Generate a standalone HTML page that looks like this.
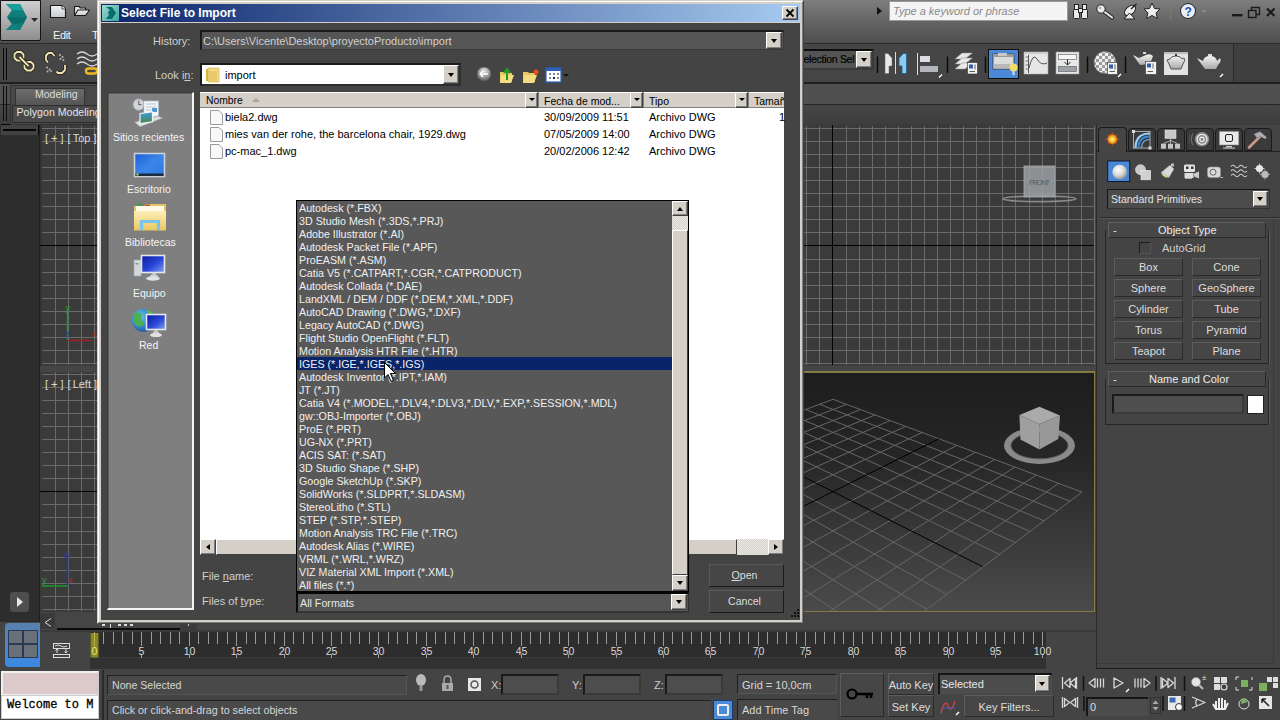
<!DOCTYPE html>
<html><head><meta charset="utf-8">
<style>
*{margin:0;padding:0;box-sizing:border-box}
html,body{width:1280px;height:720px;overflow:hidden;background:#444;font-family:"Liberation Sans",sans-serif;font-size:11px;color:#ddd}
.a{position:absolute}
.t{position:absolute;white-space:pre;line-height:1}
.sunk{background:#4a4a4a;border-top:1px solid #1c1c1c;border-left:1px solid #1c1c1c;border-bottom:1px solid #5a5a5a;border-right:1px solid #5a5a5a}
.btn3{background:#464646;border:1px solid #2a2a2a;border-top-color:#5c5c5c;border-left-color:#5c5c5c}
.wbtn{background:#d4d0c8;border-top:1px solid #fff;border-left:1px solid #fff;border-right:1px solid #404040;border-bottom:1px solid #404040;box-shadow:inset -1px -1px 0 #808080}
.darr{position:absolute;left:50%;top:50%;margin-left:-3.5px;margin-top:-2px;width:0;height:0;border-left:3.5px solid transparent;border-right:3.5px solid transparent;border-top:4px solid #000}
.uarr{position:absolute;left:50%;top:50%;margin-left:-3.5px;margin-top:-2px;width:0;height:0;border-left:3.5px solid transparent;border-right:3.5px solid transparent;border-bottom:4px solid #000}
.larr{position:absolute;left:50%;top:50%;margin-left:-2px;margin-top:-3.5px;width:0;height:0;border-top:3.5px solid transparent;border-bottom:3.5px solid transparent;border-right:4px solid #000}
.rarr{position:absolute;left:50%;top:50%;margin-left:-2px;margin-top:-3.5px;width:0;height:0;border-top:3.5px solid transparent;border-bottom:3.5px solid transparent;border-left:4px solid #000}
.check{background-color:#eceae6;background-image:linear-gradient(45deg,#d4d0c8 25%,transparent 25%,transparent 75%,#d4d0c8 75%),linear-gradient(45deg,#d4d0c8 25%,transparent 25%,transparent 75%,#d4d0c8 75%);background-size:2px 2px;background-position:0 0,1px 1px}
</style></head><body>
<!-- TOP BAR -->
<div class="a" style="left:0;top:0;width:1280px;height:44px;background:linear-gradient(#7e7e7e,#666 45%,#4e4e4e)"></div>
<div class="a" style="left:0;top:43px;width:1280px;height:1px;background:#2c2c2c"></div>
<!-- app button -->
<div class="a" style="left:0;top:0;width:41px;height:41px;background:linear-gradient(#cfcfcf,#8e8e8e);border:1px solid #151515;border-radius:0 0 2px 2px"></div>
<svg class="a" style="left:0;top:0" width="41" height="41" viewBox="0 0 41 41">
<polygon points="6,4 20,4 27,17 20,30 6,30 12,24 7,17 12,10" fill="#0f7f7c"/>
<polygon points="6,4 20,4 23.5,10.5 12,10" fill="#1b9e97"/>
<polygon points="7,17 27,17 23.5,23.5 12,24" fill="#0c6e6a"/>
<polygon points="12,24 23.5,23.5 20,30 6,30" fill="#117f7a"/>
<polygon points="31,18 38,18 34.5,22" fill="#2a2a2a"/>
</svg>
<!-- quick access -->
<svg class="a" style="left:48px;top:3px" width="50" height="20">
<defs><linearGradient id="qa" x1="0" y1="0" x2="0" y2="1"><stop offset="0" stop-color="#f0f2f4"/><stop offset="1" stop-color="#c8ccd2"/></linearGradient></defs>
<path d="M2.5 2.5 H14 L17.5 6 V14.5 H2.5 Z" fill="url(#qa)" stroke="#1a1a1a" stroke-width="1.1" stroke-linejoin="round"/>
<path d="M14 2.5 V6 H17.5" fill="#fff" stroke="#1a1a1a" stroke-width="0.8"/>
<path d="M26.5 12.5 V3.5 H31 L32.5 5 H37.5 V7" fill="#dfe2e6" stroke="#1a1a1a" stroke-width="1.1" stroke-linejoin="round"/>
<path d="M26.5 12.5 L30 7 H41.5 L37.5 12.5 Z" fill="url(#qa)" stroke="#1a1a1a" stroke-width="1.1" stroke-linejoin="round"/>
</svg>
<div class="t" style="left:53px;top:29.7px;font-size:11px;letter-spacing:-0.4px;color:#f4f4f4">Edit</div>
<div class="t" style="left:92px;top:29.7px;font-size:11px;color:#f4f4f4">T</div>
<!-- search -->
<div class="a" style="left:877px;top:7px;width:0;height:0;border-top:4px solid transparent;border-bottom:4px solid transparent;border-left:5px solid #111"></div>
<div class="a" style="left:889px;top:1px;width:179px;height:20px;background:#f4f4f4;border:1px solid #9a9a9a"></div>
<div class="t" style="left:893px;top:6.3px;font-size:11px;font-style:italic;color:#8a8a8a">Type a keyword or phrase</div>
<svg class="a" style="left:1070px;top:0" width="210" height="24">
<!-- binoculars -->
<g fill="#ececec" stroke="#222" stroke-width="1">
<rect x="3.5" y="9.5" width="6" height="9" rx="1"/><rect x="11.5" y="9.5" width="6" height="9" rx="1"/>
<rect x="4.5" y="4.5" width="4" height="5"/><rect x="12.5" y="4.5" width="4" height="5"/>
<rect x="8.5" y="8.5" width="4" height="4"/>
</g>
<!-- key -->
<g stroke="#222" stroke-width="1"><path d="M33.5 11 L42 17.5" stroke="#222" stroke-width="4" stroke-linecap="round"/><path d="M33.5 11 L42 17.5" stroke="#e8e8e8" stroke-width="2.2" stroke-linecap="round"/>
<circle cx="31" cy="9" r="4.2" fill="#ececec"/><circle cx="30" cy="8" r="1.2" fill="#aaa" stroke="none"/></g>
<!-- satellite -->
<ellipse cx="60" cy="10.5" rx="6.5" ry="4" transform="rotate(-40 60 10.5)" fill="#ececec" stroke="#222" stroke-width="1"/>
<path d="M54 19 L59.5 13 L65 19 Z" fill="#ececec" stroke="#222" stroke-width="1"/><path d="M61 9 L66.5 4" stroke="#222" stroke-width="1.5"/>
<!-- star -->
<path d="M82 3 L84.5 8.5 L90 9 L86 13 L87.5 18.5 L82 15.5 L76.5 18.5 L78 13 L74 9 L79.5 8.5 Z" fill="#ececec" stroke="#222"/>
<line x1="100.5" y1="3" x2="100.5" y2="20" stroke="#777"/>
<!-- help -->
<circle cx="118" cy="11" r="7.5" fill="#e8eef8" stroke="#222"/>
<text x="114.5" y="15.5" font-family="Liberation Sans" font-weight="bold" font-size="12" fill="#2a4ea8">?</text>
<polygon points="131,10 137,10 134,13" fill="#888"/>
<!-- min restore close -->
<rect x="162" y="14" width="10.5" height="2.4" fill="#1a1a1a"/>
<rect x="178.5" y="10.5" width="7.5" height="7" fill="none" stroke="#1a1a1a" stroke-width="1.4"/>
<path d="M181.5 10.5 V7.5 H189.5 V14.5 H186" fill="none" stroke="#1a1a1a" stroke-width="1.4"/>
<path d="M197 8.5 L204.5 16 M204.5 8.5 L197 16" stroke="#1a1a1a" stroke-width="2.2"/>
</svg>

<!-- MAIN TOOLBAR -->
<div class="a" style="left:0;top:44px;width:1233px;height:39px;background:#454545"></div>
<div class="a" style="left:1233px;top:44px;width:47px;height:39px;background:#3f3f3f;border-left:1px solid #2a2a2a"></div>
<div class="a" style="left:0;top:82px;width:1280px;height:2px;background:#1f1f1f"></div>
<div class="a" style="left:3px;top:48px;width:1px;height:32px;background:#0a0a0a"></div>
<div class="a" style="left:6px;top:48px;width:1px;height:32px;background:#0a0a0a"></div>
<svg class="a" style="left:0;top:44px" width="98" height="40">
<g fill="none" stroke-linejoin="round">
<path d="M14.5 10 L17 8 L21 8 L23.5 10.5 L23.5 14 L21 16.5 L17 16.5 L14.5 14 Z" stroke="#2a2418" stroke-width="3.6"/>
<path d="M24.5 20 L27 18 L31 18 L33.5 20.5 L33.5 24 L31 26.5 L27 26.5 L24.5 24 Z" stroke="#2a2418" stroke-width="3.6"/>
<path d="M14.5 10 L17 8 L21 8 L23.5 10.5 L23.5 14 L21 16.5 L17 16.5 L14.5 14 Z" stroke="#ece2b8" stroke-width="1.8"/>
<path d="M24.5 20 L27 18 L31 18 L33.5 20.5 L33.5 24 L31 26.5 L27 26.5 L24.5 24 Z" stroke="#ece2b8" stroke-width="1.8"/>
<path d="M19.5 13 L28.5 22" stroke="#2a2418" stroke-width="4"/><path d="M19.5 13 L28.5 22" stroke="#ece2b8" stroke-width="2"/>
<path d="M48 18.5 L46 16 V11.5 L48.5 9 H52 L54.5 12" stroke="#2a2418" stroke-width="3.6"/>
<path d="M48 18.5 L46 16 V11.5 L48.5 9 H52 L54.5 12" stroke="#ece2b8" stroke-width="1.8"/>
<path d="M65 21 V26 L62 29 H58 L56.5 27.5" stroke="#2a2418" stroke-width="3.6"/>
<path d="M65 21 V26 L62 29 H58 L56.5 27.5" stroke="#ece2b8" stroke-width="1.8"/>
</g>
<g fill="#b8b8b8"><circle cx="60" cy="11" r="1"/><circle cx="62.5" cy="13" r="1"/><circle cx="60.5" cy="15" r="1"/><circle cx="63.5" cy="16" r="0.9"/><circle cx="47" cy="23.5" r="1"/><circle cx="49.5" cy="25.5" r="1"/><circle cx="47.5" cy="27.5" r="1"/><circle cx="51" cy="27" r="0.9"/></g>
<g fill="none" stroke="#d8d8d8" stroke-width="1.3"><path d="M77 10 Q82 6 87 10 T97 10"/><path d="M77 15 Q82 11 87 15 T97 15"/><path d="M77 20 Q82 16 87 20 T97 20"/></g>
<rect x="86" y="24.5" width="11" height="5" rx="2.5" fill="none" stroke="#f0b820" stroke-width="2.4"/>
</svg>
<!-- selection set combo -->
<div class="a" style="left:790px;top:49px;width:84px;height:21px;background:#555;border-top:2px solid #0e0e0e;border-left:2px solid #0e0e0e;border-bottom:2px solid #3a3a3a;border-right:2px solid #3a3a3a;overflow:hidden"><div class="t" style="left:4.8px;top:2.7px;font-size:10.5px;letter-spacing:-0.3px;color:#000;-webkit-text-stroke:0.2px #000">Selection Sel</div></div>
<div class="a wbtn" style="left:856px;top:51px;width:16px;height:17px"><div class="darr"></div></div>
<svg class="a" style="left:874px;top:44px" width="360" height="40">
<defs><pattern id="chk" width="6" height="6" patternUnits="userSpaceOnUse"><rect width="6" height="6" fill="#9a9a9a"/><rect width="3" height="3" fill="#f0f0f0"/><rect x="3" y="3" width="3" height="3" fill="#f0f0f0"/></pattern>
<linearGradient id="tp" x1="0" y1="0" x2="0" y2="1"><stop offset="0" stop-color="#f4f4f4"/><stop offset="1" stop-color="#a8a8a8"/></linearGradient></defs>
<g stroke="#0c0c0c" stroke-width="1.5"><line x1="3.5" y1="12.5" x2="3.5" y2="29"/><line x1="73.5" y1="12.5" x2="73.5" y2="29"/><line x1="111.5" y1="12.5" x2="111.5" y2="29"/><line x1="213.5" y1="12.5" x2="213.5" y2="29"/><line x1="251.5" y1="12.5" x2="251.5" y2="29"/></g>
<!-- mirror -->
<path d="M11 9.5 L14 9.5 L18 14 V22 H15 V29.5 H11 Z" fill="#e8e8e8" stroke="#666" stroke-width="0.5"/>
<line x1="21.5" y1="8" x2="21.5" y2="30" stroke="#ddd" stroke-width="1"/>
<path d="M32.5 9.5 L29.5 9.5 L25 14 V22 H28 V29.5 H32.5 Z" fill="#8ccaf0" stroke="#1f5f90" stroke-width="0.8"/>
<!-- align -->
<line x1="43.5" y1="9" x2="43.5" y2="31" stroke="#ddd" stroke-width="1"/>
<rect x="46" y="12" width="10" height="6" fill="#dadde2"/><rect x="46" y="22" width="18" height="6" fill="#b4b8be"/>
<path d="M65 33.5 L68 30.5" stroke="#fff" stroke-width="1.4"/>
<!-- layers -->
<g fill="#e8e8e8" stroke="#888" stroke-width="0.5"><path d="M81 15 L91 15 L98.5 9 L88 9 Z"/><path d="M81 20 L91 20 L98.5 14 L88 14 Z"/><path d="M81 25 L91 25 L98.5 19 L88 19 Z"/></g>
<rect x="93.5" y="18.5" width="10" height="11.5" fill="#f2f2f2" stroke="#333" stroke-width="0.6"/><rect x="95" y="20.5" width="4" height="4" fill="#2f5fa8"/><rect x="100" y="20.5" width="2" height="5" fill="#aaa"/><path d="M95.5 27.5 H101" stroke="#333" stroke-width="0.8"/>
<!-- scene explorer (active) -->
<rect x="114.5" y="5.5" width="30" height="29" fill="#4a88d8" stroke="#0e0e0e" stroke-width="1"/>
<rect x="119" y="10" width="21" height="15" fill="#dcdcdc" stroke="#333" stroke-width="0.8"/><rect x="119" y="10" width="21" height="3" fill="#999"/><rect x="124" y="9" width="9" height="3" fill="#c8c8c8"/><rect x="119.5" y="20" width="20" height="4.5" fill="#b8b8b8"/>
<circle cx="139.5" cy="23.5" r="4" fill="#f2dc6a"/><rect x="138.5" y="27" width="2" height="4" fill="#ddd"/>
<!-- curve editor -->
<rect x="150" y="8" width="24" height="22" fill="#e6e6e6" stroke="#aaa" stroke-width="0.6"/><rect x="150" y="8" width="24" height="2" fill="#ccc"/>
<path d="M155 24 Q159 8 163 15 T173 19" fill="none" stroke="#555" stroke-width="1"/><line x1="154.5" y1="11" x2="154.5" y2="29" stroke="#555"/><g stroke="#555" stroke-width="0.8"><line x1="151.5" y1="13" x2="154" y2="13"/><line x1="151.5" y1="17" x2="154" y2="17"/><line x1="151.5" y1="21" x2="154" y2="21"/><line x1="151.5" y1="25" x2="154" y2="25"/></g>
<!-- schematic -->
<rect x="182" y="8" width="23" height="22" fill="#e8e8e8" stroke="#999" stroke-width="0.6"/>
<rect x="184.5" y="10.5" width="18" height="5" fill="#f6f6f6" stroke="#555" stroke-width="0.6"/><rect x="184.5" y="22.5" width="18" height="5" fill="#9ca2aa" stroke="#555" stroke-width="0.6"/>
<path d="M193.5 15.5 V21 M190.5 18 L193.5 21 L196.5 18" stroke="#222" fill="none"/>
<!-- material -->
<circle cx="231" cy="18.5" r="11" fill="url(#chk)"/><circle cx="231" cy="18.5" r="11" fill="none" stroke="#777" stroke-width="0.6"/>
<rect x="233.5" y="18.5" width="10" height="12" fill="#f2f2f2" stroke="#333" stroke-width="0.6"/><rect x="235" y="20.5" width="4" height="4" fill="#2f5fa8"/><rect x="240" y="20.5" width="2" height="5" fill="#aaa"/><path d="M235.5 27.5 H241" stroke="#333" stroke-width="0.8"/>
<path d="M244 33 L247 30" stroke="#fff" stroke-width="1.4"/>
<!-- teapot 1 -->
<path d="M259 11 L265 14 L272 11 Q276 9 279 12 L276 20 L266 21 Z" fill="url(#tp)"/><rect x="269" y="8" width="3" height="2" fill="#ddd"/>
<rect x="271.5" y="17.5" width="11" height="13" fill="#f2f2f2" stroke="#333" stroke-width="0.6"/><rect x="273" y="19.5" width="4" height="4" fill="#2f5fa8"/><rect x="278" y="19.5" width="2" height="5" fill="#aaa"/><path d="M273.5 27.5 H279" stroke="#333" stroke-width="0.8"/>
<!-- render frame -->
<rect x="290" y="8" width="24" height="23" fill="#e2e2e2"/><rect x="290" y="8" width="24" height="2" fill="#bbb"/>
<path d="M296 15 Q297 12 302 12 Q307 12 308 15 L310 14 Q312 16 309 20 L307 25 H297 L295 20 L293 16 Z" fill="url(#tp)" stroke="#333" stroke-width="0.8"/><rect x="301" y="10" width="2" height="2" fill="#333"/>
<!-- teapot 2 -->
<path d="M323 14 L329 17 Q330 12 336 12 Q342 12 343 17 L346 14 Q348 17 344 21 L342 25 H331 L328 21 Z" fill="url(#tp)"/><rect x="334" y="10" width="4" height="2" fill="#ddd"/>
<path d="M346 33 L349 30" stroke="#fff" stroke-width="1.4"/>
</svg>

<!-- RIBBON -->
<div class="a" style="left:0;top:84px;width:1280px;height:20px;background:#505050"></div>
<div class="a" style="left:0;top:104px;width:1280px;height:1px;background:#262626"></div>
<div class="a" style="left:0;top:105px;width:1280px;height:20px;background:linear-gradient(#474747,#3c3c3c)"></div>
<div class="a" style="left:3px;top:86px;width:1px;height:35px;background:#0a0a0a"></div>
<div class="a" style="left:6px;top:86px;width:1px;height:35px;background:#0a0a0a"></div>
<div class="a" style="left:10px;top:85px;width:90px;height:40px;background:#484848;border:1px solid #333"></div>
<div class="a" style="left:15px;top:88px;width:70px;height:17px;background:linear-gradient(#6c6c6c,#555);border:1px solid #333;border-bottom:none"></div>
<div class="t" style="left:35px;top:89.3px;font-size:10.5px;color:#dcdcdc">Modeling</div>
<div class="a" style="left:12px;top:105px;width:90px;height:18px;background:#4a4a4a;border:1px solid #2c2c2c"></div>
<div class="t" style="left:16.5px;top:107.3px;font-size:10.6px;color:#e6e6e6">Polygon Modeling</div>
<div class="a" style="left:0;top:125px;width:39px;height:497px;background:#2d2d2d"></div>
<div class="a" style="left:1px;top:125px;width:37px;height:10px;background:#424242"></div>
<div class="a" style="left:3px;top:129px;width:33px;height:1.5px;background:#050505"></div>
<div class="a" style="left:1px;top:124px;width:9px;height:1px;background:#050505"></div>
<div class="a" style="left:38px;top:125px;width:1px;height:10px;background:#050505"></div>
<div class="a" style="left:39px;top:125px;width:1px;height:497px;background:#1e1e1e"></div>
<div class="a" style="left:10px;top:592px;width:19px;height:20px;background:#4e4e4e;border-radius:3px"></div>
<div class="a" style="left:17px;top:597px;width:0;height:0;border-top:5px solid transparent;border-bottom:5px solid transparent;border-left:6px solid #e8e8e8"></div>
<svg class="a" style="left:0;top:0" width="1280" height="720">
<defs><linearGradient id="pg" x1="0" y1="0" x2="0" y2="1"><stop offset="0" stop-color="#1d1d1d"/><stop offset="0.35" stop-color="#262626"/><stop offset="1" stop-color="#4b4b4b"/></linearGradient></defs>
<rect x="40" y="125" width="528" height="241" fill="#3b3b3b"/><rect x="40" y="125" width="2" height="487" fill="#333"/>
<line x1="55.5" y1="126" x2="55.5" y2="365" stroke="#6b6b6b" stroke-width="1"/><line x1="68.5" y1="126" x2="68.5" y2="365" stroke="#6b6b6b" stroke-width="1"/><line x1="81.5" y1="126" x2="81.5" y2="365" stroke="#6b6b6b" stroke-width="1"/><line x1="94.5" y1="126" x2="94.5" y2="365" stroke="#6b6b6b" stroke-width="1"/><line x1="107.5" y1="126" x2="107.5" y2="365" stroke="#6b6b6b" stroke-width="1"/><line x1="121.5" y1="126" x2="121.5" y2="365" stroke="#6b6b6b" stroke-width="1"/><line x1="134.5" y1="126" x2="134.5" y2="365" stroke="#6b6b6b" stroke-width="1"/><line x1="147.5" y1="126" x2="147.5" y2="365" stroke="#6b6b6b" stroke-width="1"/><line x1="160.5" y1="126" x2="160.5" y2="365" stroke="#6b6b6b" stroke-width="1"/><line x1="173.5" y1="126" x2="173.5" y2="365" stroke="#6b6b6b" stroke-width="1"/><line x1="186.5" y1="126" x2="186.5" y2="365" stroke="#6b6b6b" stroke-width="1"/><line x1="199.5" y1="126" x2="199.5" y2="365" stroke="#6b6b6b" stroke-width="1"/><line x1="212.5" y1="126" x2="212.5" y2="365" stroke="#6b6b6b" stroke-width="1"/><line x1="225.5" y1="126" x2="225.5" y2="365" stroke="#6b6b6b" stroke-width="1"/><line x1="238.5" y1="126" x2="238.5" y2="365" stroke="#6b6b6b" stroke-width="1"/><line x1="251.5" y1="126" x2="251.5" y2="365" stroke="#6b6b6b" stroke-width="1"/><line x1="264.5" y1="126" x2="264.5" y2="365" stroke="#6b6b6b" stroke-width="1"/><line x1="277.5" y1="126" x2="277.5" y2="365" stroke="#6b6b6b" stroke-width="1"/><line x1="290.5" y1="126" x2="290.5" y2="365" stroke="#6b6b6b" stroke-width="1"/><line x1="317.5" y1="126" x2="317.5" y2="365" stroke="#6b6b6b" stroke-width="1"/><line x1="330.5" y1="126" x2="330.5" y2="365" stroke="#6b6b6b" stroke-width="1"/><line x1="343.5" y1="126" x2="343.5" y2="365" stroke="#6b6b6b" stroke-width="1"/><line x1="356.5" y1="126" x2="356.5" y2="365" stroke="#6b6b6b" stroke-width="1"/><line x1="369.5" y1="126" x2="369.5" y2="365" stroke="#6b6b6b" stroke-width="1"/><line x1="382.5" y1="126" x2="382.5" y2="365" stroke="#6b6b6b" stroke-width="1"/><line x1="395.5" y1="126" x2="395.5" y2="365" stroke="#6b6b6b" stroke-width="1"/><line x1="408.5" y1="126" x2="408.5" y2="365" stroke="#6b6b6b" stroke-width="1"/><line x1="421.5" y1="126" x2="421.5" y2="365" stroke="#6b6b6b" stroke-width="1"/><line x1="434.5" y1="126" x2="434.5" y2="365" stroke="#6b6b6b" stroke-width="1"/><line x1="447.5" y1="126" x2="447.5" y2="365" stroke="#6b6b6b" stroke-width="1"/><line x1="460.5" y1="126" x2="460.5" y2="365" stroke="#6b6b6b" stroke-width="1"/><line x1="473.5" y1="126" x2="473.5" y2="365" stroke="#6b6b6b" stroke-width="1"/><line x1="486.5" y1="126" x2="486.5" y2="365" stroke="#6b6b6b" stroke-width="1"/><line x1="500.5" y1="126" x2="500.5" y2="365" stroke="#6b6b6b" stroke-width="1"/><line x1="513.5" y1="126" x2="513.5" y2="365" stroke="#6b6b6b" stroke-width="1"/><line x1="526.5" y1="126" x2="526.5" y2="365" stroke="#6b6b6b" stroke-width="1"/><line x1="539.5" y1="126" x2="539.5" y2="365" stroke="#6b6b6b" stroke-width="1"/><line x1="552.5" y1="126" x2="552.5" y2="365" stroke="#6b6b6b" stroke-width="1"/><line x1="565.5" y1="126" x2="565.5" y2="365" stroke="#6b6b6b" stroke-width="1"/><line x1="42" y1="128.5" x2="567" y2="128.5" stroke="#6b6b6b" stroke-width="1"/><line x1="42" y1="141.5" x2="567" y2="141.5" stroke="#6b6b6b" stroke-width="1"/><line x1="42" y1="154.5" x2="567" y2="154.5" stroke="#6b6b6b" stroke-width="1"/><line x1="42" y1="167.5" x2="567" y2="167.5" stroke="#6b6b6b" stroke-width="1"/><line x1="42" y1="180.5" x2="567" y2="180.5" stroke="#6b6b6b" stroke-width="1"/><line x1="42" y1="193.5" x2="567" y2="193.5" stroke="#6b6b6b" stroke-width="1"/><line x1="42" y1="206.5" x2="567" y2="206.5" stroke="#6b6b6b" stroke-width="1"/><line x1="42" y1="219.5" x2="567" y2="219.5" stroke="#6b6b6b" stroke-width="1"/><line x1="42" y1="232.5" x2="567" y2="232.5" stroke="#6b6b6b" stroke-width="1"/><line x1="42" y1="259.5" x2="567" y2="259.5" stroke="#6b6b6b" stroke-width="1"/><line x1="42" y1="272.5" x2="567" y2="272.5" stroke="#6b6b6b" stroke-width="1"/><line x1="42" y1="285.5" x2="567" y2="285.5" stroke="#6b6b6b" stroke-width="1"/><line x1="42" y1="298.5" x2="567" y2="298.5" stroke="#6b6b6b" stroke-width="1"/><line x1="42" y1="311.5" x2="567" y2="311.5" stroke="#6b6b6b" stroke-width="1"/><line x1="42" y1="324.5" x2="567" y2="324.5" stroke="#6b6b6b" stroke-width="1"/><line x1="42" y1="337.5" x2="567" y2="337.5" stroke="#6b6b6b" stroke-width="1"/><line x1="42" y1="350.5" x2="567" y2="350.5" stroke="#6b6b6b" stroke-width="1"/><line x1="42" y1="363.5" x2="567" y2="363.5" stroke="#6b6b6b" stroke-width="1"/>
<line x1="40" y1="245.5" x2="567" y2="245.5" stroke="#000" stroke-width="1"/>
<line x1="303.5" y1="125" x2="303.5" y2="365" stroke="#000" stroke-width="1"/>
<rect x="40" y="366" width="1056" height="6" fill="#454545"/>
<rect x="40" y="372" width="528" height="240" fill="#3b3b3b"/>
<line x1="55.5" y1="372" x2="55.5" y2="611" stroke="#6b6b6b" stroke-width="1"/><line x1="68.5" y1="372" x2="68.5" y2="611" stroke="#6b6b6b" stroke-width="1"/><line x1="81.5" y1="372" x2="81.5" y2="611" stroke="#6b6b6b" stroke-width="1"/><line x1="94.5" y1="372" x2="94.5" y2="611" stroke="#6b6b6b" stroke-width="1"/><line x1="107.5" y1="372" x2="107.5" y2="611" stroke="#6b6b6b" stroke-width="1"/><line x1="121.5" y1="372" x2="121.5" y2="611" stroke="#6b6b6b" stroke-width="1"/><line x1="134.5" y1="372" x2="134.5" y2="611" stroke="#6b6b6b" stroke-width="1"/><line x1="147.5" y1="372" x2="147.5" y2="611" stroke="#6b6b6b" stroke-width="1"/><line x1="160.5" y1="372" x2="160.5" y2="611" stroke="#6b6b6b" stroke-width="1"/><line x1="173.5" y1="372" x2="173.5" y2="611" stroke="#6b6b6b" stroke-width="1"/><line x1="186.5" y1="372" x2="186.5" y2="611" stroke="#6b6b6b" stroke-width="1"/><line x1="199.5" y1="372" x2="199.5" y2="611" stroke="#6b6b6b" stroke-width="1"/><line x1="212.5" y1="372" x2="212.5" y2="611" stroke="#6b6b6b" stroke-width="1"/><line x1="225.5" y1="372" x2="225.5" y2="611" stroke="#6b6b6b" stroke-width="1"/><line x1="238.5" y1="372" x2="238.5" y2="611" stroke="#6b6b6b" stroke-width="1"/><line x1="251.5" y1="372" x2="251.5" y2="611" stroke="#6b6b6b" stroke-width="1"/><line x1="264.5" y1="372" x2="264.5" y2="611" stroke="#6b6b6b" stroke-width="1"/><line x1="277.5" y1="372" x2="277.5" y2="611" stroke="#6b6b6b" stroke-width="1"/><line x1="290.5" y1="372" x2="290.5" y2="611" stroke="#6b6b6b" stroke-width="1"/><line x1="317.5" y1="372" x2="317.5" y2="611" stroke="#6b6b6b" stroke-width="1"/><line x1="330.5" y1="372" x2="330.5" y2="611" stroke="#6b6b6b" stroke-width="1"/><line x1="343.5" y1="372" x2="343.5" y2="611" stroke="#6b6b6b" stroke-width="1"/><line x1="356.5" y1="372" x2="356.5" y2="611" stroke="#6b6b6b" stroke-width="1"/><line x1="369.5" y1="372" x2="369.5" y2="611" stroke="#6b6b6b" stroke-width="1"/><line x1="382.5" y1="372" x2="382.5" y2="611" stroke="#6b6b6b" stroke-width="1"/><line x1="395.5" y1="372" x2="395.5" y2="611" stroke="#6b6b6b" stroke-width="1"/><line x1="408.5" y1="372" x2="408.5" y2="611" stroke="#6b6b6b" stroke-width="1"/><line x1="421.5" y1="372" x2="421.5" y2="611" stroke="#6b6b6b" stroke-width="1"/><line x1="434.5" y1="372" x2="434.5" y2="611" stroke="#6b6b6b" stroke-width="1"/><line x1="447.5" y1="372" x2="447.5" y2="611" stroke="#6b6b6b" stroke-width="1"/><line x1="460.5" y1="372" x2="460.5" y2="611" stroke="#6b6b6b" stroke-width="1"/><line x1="473.5" y1="372" x2="473.5" y2="611" stroke="#6b6b6b" stroke-width="1"/><line x1="486.5" y1="372" x2="486.5" y2="611" stroke="#6b6b6b" stroke-width="1"/><line x1="500.5" y1="372" x2="500.5" y2="611" stroke="#6b6b6b" stroke-width="1"/><line x1="513.5" y1="372" x2="513.5" y2="611" stroke="#6b6b6b" stroke-width="1"/><line x1="526.5" y1="372" x2="526.5" y2="611" stroke="#6b6b6b" stroke-width="1"/><line x1="539.5" y1="372" x2="539.5" y2="611" stroke="#6b6b6b" stroke-width="1"/><line x1="552.5" y1="372" x2="552.5" y2="611" stroke="#6b6b6b" stroke-width="1"/><line x1="565.5" y1="372" x2="565.5" y2="611" stroke="#6b6b6b" stroke-width="1"/><line x1="42" y1="374.5" x2="567" y2="374.5" stroke="#6b6b6b" stroke-width="1"/><line x1="42" y1="387.5" x2="567" y2="387.5" stroke="#6b6b6b" stroke-width="1"/><line x1="42" y1="400.5" x2="567" y2="400.5" stroke="#6b6b6b" stroke-width="1"/><line x1="42" y1="413.5" x2="567" y2="413.5" stroke="#6b6b6b" stroke-width="1"/><line x1="42" y1="426.5" x2="567" y2="426.5" stroke="#6b6b6b" stroke-width="1"/><line x1="42" y1="439.5" x2="567" y2="439.5" stroke="#6b6b6b" stroke-width="1"/><line x1="42" y1="452.5" x2="567" y2="452.5" stroke="#6b6b6b" stroke-width="1"/><line x1="42" y1="465.5" x2="567" y2="465.5" stroke="#6b6b6b" stroke-width="1"/><line x1="42" y1="478.5" x2="567" y2="478.5" stroke="#6b6b6b" stroke-width="1"/><line x1="42" y1="504.5" x2="567" y2="504.5" stroke="#6b6b6b" stroke-width="1"/><line x1="42" y1="517.5" x2="567" y2="517.5" stroke="#6b6b6b" stroke-width="1"/><line x1="42" y1="531.5" x2="567" y2="531.5" stroke="#6b6b6b" stroke-width="1"/><line x1="42" y1="544.5" x2="567" y2="544.5" stroke="#6b6b6b" stroke-width="1"/><line x1="42" y1="557.5" x2="567" y2="557.5" stroke="#6b6b6b" stroke-width="1"/><line x1="42" y1="570.5" x2="567" y2="570.5" stroke="#6b6b6b" stroke-width="1"/><line x1="42" y1="583.5" x2="567" y2="583.5" stroke="#6b6b6b" stroke-width="1"/><line x1="42" y1="596.5" x2="567" y2="596.5" stroke="#6b6b6b" stroke-width="1"/><line x1="42" y1="609.5" x2="567" y2="609.5" stroke="#6b6b6b" stroke-width="1"/>
<line x1="40" y1="491.5" x2="567" y2="491.5" stroke="#000" stroke-width="1"/>
<rect x="568" y="125" width="527" height="241" fill="#3b3b3b"/>
<line x1="571.5" y1="126" x2="571.5" y2="365" stroke="#6b6b6b" stroke-width="1"/><line x1="584.5" y1="126" x2="584.5" y2="365" stroke="#6b6b6b" stroke-width="1"/><line x1="597.5" y1="126" x2="597.5" y2="365" stroke="#6b6b6b" stroke-width="1"/><line x1="610.5" y1="126" x2="610.5" y2="365" stroke="#6b6b6b" stroke-width="1"/><line x1="623.5" y1="126" x2="623.5" y2="365" stroke="#6b6b6b" stroke-width="1"/><line x1="636.5" y1="126" x2="636.5" y2="365" stroke="#6b6b6b" stroke-width="1"/><line x1="649.5" y1="126" x2="649.5" y2="365" stroke="#6b6b6b" stroke-width="1"/><line x1="663.5" y1="126" x2="663.5" y2="365" stroke="#6b6b6b" stroke-width="1"/><line x1="676.5" y1="126" x2="676.5" y2="365" stroke="#6b6b6b" stroke-width="1"/><line x1="689.5" y1="126" x2="689.5" y2="365" stroke="#6b6b6b" stroke-width="1"/><line x1="702.5" y1="126" x2="702.5" y2="365" stroke="#6b6b6b" stroke-width="1"/><line x1="715.5" y1="126" x2="715.5" y2="365" stroke="#6b6b6b" stroke-width="1"/><line x1="728.5" y1="126" x2="728.5" y2="365" stroke="#6b6b6b" stroke-width="1"/><line x1="741.5" y1="126" x2="741.5" y2="365" stroke="#6b6b6b" stroke-width="1"/><line x1="754.5" y1="126" x2="754.5" y2="365" stroke="#6b6b6b" stroke-width="1"/><line x1="767.5" y1="126" x2="767.5" y2="365" stroke="#6b6b6b" stroke-width="1"/><line x1="780.5" y1="126" x2="780.5" y2="365" stroke="#6b6b6b" stroke-width="1"/><line x1="793.5" y1="126" x2="793.5" y2="365" stroke="#6b6b6b" stroke-width="1"/><line x1="806.5" y1="126" x2="806.5" y2="365" stroke="#6b6b6b" stroke-width="1"/><line x1="819.5" y1="126" x2="819.5" y2="365" stroke="#6b6b6b" stroke-width="1"/><line x1="846.5" y1="126" x2="846.5" y2="365" stroke="#6b6b6b" stroke-width="1"/><line x1="859.5" y1="126" x2="859.5" y2="365" stroke="#6b6b6b" stroke-width="1"/><line x1="872.5" y1="126" x2="872.5" y2="365" stroke="#6b6b6b" stroke-width="1"/><line x1="885.5" y1="126" x2="885.5" y2="365" stroke="#6b6b6b" stroke-width="1"/><line x1="898.5" y1="126" x2="898.5" y2="365" stroke="#6b6b6b" stroke-width="1"/><line x1="911.5" y1="126" x2="911.5" y2="365" stroke="#6b6b6b" stroke-width="1"/><line x1="924.5" y1="126" x2="924.5" y2="365" stroke="#6b6b6b" stroke-width="1"/><line x1="937.5" y1="126" x2="937.5" y2="365" stroke="#6b6b6b" stroke-width="1"/><line x1="950.5" y1="126" x2="950.5" y2="365" stroke="#6b6b6b" stroke-width="1"/><line x1="963.5" y1="126" x2="963.5" y2="365" stroke="#6b6b6b" stroke-width="1"/><line x1="976.5" y1="126" x2="976.5" y2="365" stroke="#6b6b6b" stroke-width="1"/><line x1="989.5" y1="126" x2="989.5" y2="365" stroke="#6b6b6b" stroke-width="1"/><line x1="1002.5" y1="126" x2="1002.5" y2="365" stroke="#6b6b6b" stroke-width="1"/><line x1="1015.5" y1="126" x2="1015.5" y2="365" stroke="#6b6b6b" stroke-width="1"/><line x1="1029.5" y1="126" x2="1029.5" y2="365" stroke="#6b6b6b" stroke-width="1"/><line x1="1042.5" y1="126" x2="1042.5" y2="365" stroke="#6b6b6b" stroke-width="1"/><line x1="1055.5" y1="126" x2="1055.5" y2="365" stroke="#6b6b6b" stroke-width="1"/><line x1="1068.5" y1="126" x2="1068.5" y2="365" stroke="#6b6b6b" stroke-width="1"/><line x1="1081.5" y1="126" x2="1081.5" y2="365" stroke="#6b6b6b" stroke-width="1"/><line x1="1094.5" y1="126" x2="1094.5" y2="365" stroke="#6b6b6b" stroke-width="1"/><line x1="568" y1="128.5" x2="1094.6" y2="128.5" stroke="#6b6b6b" stroke-width="1"/><line x1="568" y1="141.5" x2="1094.6" y2="141.5" stroke="#6b6b6b" stroke-width="1"/><line x1="568" y1="154.5" x2="1094.6" y2="154.5" stroke="#6b6b6b" stroke-width="1"/><line x1="568" y1="167.5" x2="1094.6" y2="167.5" stroke="#6b6b6b" stroke-width="1"/><line x1="568" y1="180.5" x2="1094.6" y2="180.5" stroke="#6b6b6b" stroke-width="1"/><line x1="568" y1="193.5" x2="1094.6" y2="193.5" stroke="#6b6b6b" stroke-width="1"/><line x1="568" y1="206.5" x2="1094.6" y2="206.5" stroke="#6b6b6b" stroke-width="1"/><line x1="568" y1="219.5" x2="1094.6" y2="219.5" stroke="#6b6b6b" stroke-width="1"/><line x1="568" y1="232.5" x2="1094.6" y2="232.5" stroke="#6b6b6b" stroke-width="1"/><line x1="568" y1="259.5" x2="1094.6" y2="259.5" stroke="#6b6b6b" stroke-width="1"/><line x1="568" y1="272.5" x2="1094.6" y2="272.5" stroke="#6b6b6b" stroke-width="1"/><line x1="568" y1="285.5" x2="1094.6" y2="285.5" stroke="#6b6b6b" stroke-width="1"/><line x1="568" y1="298.5" x2="1094.6" y2="298.5" stroke="#6b6b6b" stroke-width="1"/><line x1="568" y1="311.5" x2="1094.6" y2="311.5" stroke="#6b6b6b" stroke-width="1"/><line x1="568" y1="324.5" x2="1094.6" y2="324.5" stroke="#6b6b6b" stroke-width="1"/><line x1="568" y1="337.5" x2="1094.6" y2="337.5" stroke="#6b6b6b" stroke-width="1"/><line x1="568" y1="350.5" x2="1094.6" y2="350.5" stroke="#6b6b6b" stroke-width="1"/><line x1="568" y1="363.5" x2="1094.6" y2="363.5" stroke="#6b6b6b" stroke-width="1"/>
<line x1="568" y1="245.5" x2="1094" y2="245.5" stroke="#000" stroke-width="1"/>
<line x1="832.5" y1="125" x2="832.5" y2="365" stroke="#000" stroke-width="1"/>
<rect x="567" y="125" width="1.5" height="487" fill="#454545"/>
<rect x="568" y="372" width="528" height="240" fill="url(#pg)"/>
<clipPath id="pc"><rect x="569" y="373" width="526" height="238"/></clipPath><g clip-path="url(#pc)">
<line x1="585.9" y1="491.2" x2="833.0" y2="399.3" stroke="#676767" stroke-width="1"/><line x1="585.9" y1="491.2" x2="832.9" y2="680.5" stroke="#676767" stroke-width="1"/><line x1="597.7" y1="500.3" x2="846.4" y2="404.4" stroke="#676767" stroke-width="1"/><line x1="608.9" y1="482.6" x2="859.0" y2="660.8" stroke="#676767" stroke-width="1"/><line x1="610.1" y1="509.8" x2="860.4" y2="409.6" stroke="#676767" stroke-width="1"/><line x1="630.9" y1="474.4" x2="883.2" y2="642.4" stroke="#676767" stroke-width="1"/><line x1="623.3" y1="519.8" x2="874.9" y2="415.0" stroke="#676767" stroke-width="1"/><line x1="651.9" y1="466.6" x2="905.8" y2="625.3" stroke="#676767" stroke-width="1"/><line x1="637.1" y1="530.4" x2="890.0" y2="420.6" stroke="#676767" stroke-width="1"/><line x1="672.0" y1="459.2" x2="927.0" y2="609.3" stroke="#676767" stroke-width="1"/><line x1="651.7" y1="541.6" x2="905.6" y2="426.4" stroke="#676767" stroke-width="1"/><line x1="691.2" y1="452.0" x2="946.8" y2="594.3" stroke="#676767" stroke-width="1"/><line x1="667.2" y1="553.5" x2="922.0" y2="432.5" stroke="#676767" stroke-width="1"/><line x1="709.7" y1="445.2" x2="965.5" y2="580.2" stroke="#676767" stroke-width="1"/><line x1="701.0" y1="579.4" x2="956.8" y2="445.5" stroke="#676767" stroke-width="1"/><line x1="744.2" y1="432.3" x2="999.6" y2="554.4" stroke="#676767" stroke-width="1"/><line x1="719.5" y1="593.5" x2="975.3" y2="452.4" stroke="#676767" stroke-width="1"/><line x1="760.5" y1="426.3" x2="1015.2" y2="542.6" stroke="#676767" stroke-width="1"/><line x1="739.2" y1="608.6" x2="994.7" y2="459.6" stroke="#676767" stroke-width="1"/><line x1="776.1" y1="420.5" x2="1030.0" y2="531.4" stroke="#676767" stroke-width="1"/><line x1="760.2" y1="624.8" x2="1015.0" y2="467.2" stroke="#676767" stroke-width="1"/><line x1="791.2" y1="414.9" x2="1044.0" y2="520.8" stroke="#676767" stroke-width="1"/><line x1="782.8" y1="642.0" x2="1036.3" y2="475.1" stroke="#676767" stroke-width="1"/><line x1="805.6" y1="409.5" x2="1057.3" y2="510.8" stroke="#676767" stroke-width="1"/><line x1="806.9" y1="660.5" x2="1058.6" y2="483.4" stroke="#676767" stroke-width="1"/><line x1="819.6" y1="404.3" x2="1070.0" y2="501.2" stroke="#676767" stroke-width="1"/><line x1="832.9" y1="680.5" x2="1082.0" y2="492.1" stroke="#676767" stroke-width="1"/><line x1="833.0" y1="399.3" x2="1082.0" y2="492.1" stroke="#676767" stroke-width="1"/><line x1="683.6" y1="566.0" x2="939.0" y2="438.8" stroke="#000" stroke-width="1"/><line x1="727.3" y1="438.6" x2="983.0" y2="566.9" stroke="#000" stroke-width="1"/>
</g>
<rect x="569" y="372" width="526" height="240" fill="none" stroke="#847a46" stroke-width="2"/>
<g stroke-width="1.5"><line x1="67.5" y1="309" x2="67.5" y2="340" stroke="#1a9a2a"/><line x1="67.5" y1="340.5" x2="92" y2="340.5" stroke="#a02020"/><line x1="67.5" y1="553" x2="67.5" y2="586" stroke="#2030b0"/><line x1="42" y1="586" x2="67.5" y2="586" stroke="#1a9a2a"/></g>
<g font-family="Liberation Sans" font-size="9"><text x="65.5" y="311" fill="#2aa03a">y</text><text x="65.5" y="337" fill="#2030b8">z</text><text x="92" y="337" fill="#c02020">x</text><text x="64" y="558" fill="#2838c0">z</text><text x="42" y="583" fill="#2aa03a">y</text><text x="68" y="583" fill="#c02020">x</text></g>
<ellipse cx="1039.5" cy="198.8" rx="36.5" ry="2.8" fill="none" stroke="#8a8a8a" stroke-width="1.6"/>
<rect x="1024" y="166" width="31" height="31" fill="#a4a8ac" fill-opacity="0.78" stroke="#a8acb0" stroke-width="0.8"/>
<text x="1029" y="185" font-family="Liberation Sans" font-size="7.5" fill="#555a5e" textLength="21">FRONT</text>
<ellipse cx="1039.5" cy="445.5" rx="35.5" ry="18.5" fill="#8a8a8a"/>
<ellipse cx="1039.5" cy="445.5" rx="28.5" ry="13.3" fill="#262626" stroke="#5a5a5a" stroke-width="1"/>
<polygon points="1039.4,406.7 1060,415.5 1039.4,424 1019.4,415" fill="#aaaaaa"/>
<polygon points="1019.4,415 1039.4,424 1039.4,449.4 1020.5,439.4" fill="#9f9f9f"/>
<polygon points="1039.4,424 1060,415.5 1058.3,438.9 1039.4,449.4" fill="#989898"/>
</svg>
<div class="t" style="left:45px;top:133px;font-size:11px;color:#d8d8d8;letter-spacing:0">[<span style="margin-left:3px">+</span><span style="margin-left:3px">]</span><span style="margin-left:4px">[</span><span style="margin-left:2px">Top</span><span style="margin-left:3px">]</span></div>
<div class="t" style="left:45px;top:379px;font-size:11px;color:#d8d8d8;letter-spacing:0">[<span style="margin-left:3px">+</span><span style="margin-left:3px">]</span><span style="margin-left:4px">[</span><span style="margin-left:2px">Left</span><span style="margin-left:3px">]</span></div><!-- COMMAND PANEL -->
<div class="a" style="left:1095px;top:125px;width:185px;height:545px;background:#444"></div>
<div class="a" style="left:1096px;top:125px;width:1px;height:543px;background:#2a2a2a"></div>
<div class="a" style="left:1097px;top:151px;width:183px;height:1px;background:#222"></div>
<div class="a" style="left:1098px;top:127px;width:29px;height:25px;background:#454545;border:1px solid #1a1a1a;border-bottom:none;border-radius:4px 4px 0 0"></div>
<div class="a" style="left:1128px;top:128px;width:28px;height:23px;background:#3a3a3a;border:1px solid #1a1a1a;border-radius:4px 4px 0 0"></div>
<div class="a" style="left:1157px;top:128px;width:28px;height:23px;background:#3a3a3a;border:1px solid #1a1a1a;border-radius:4px 4px 0 0"></div>
<div class="a" style="left:1186px;top:128px;width:28px;height:23px;background:#3a3a3a;border:1px solid #1a1a1a;border-radius:4px 4px 0 0"></div>
<div class="a" style="left:1215px;top:128px;width:28px;height:23px;background:#3a3a3a;border:1px solid #1a1a1a;border-radius:4px 4px 0 0"></div>
<div class="a" style="left:1244px;top:128px;width:28px;height:23px;background:#3a3a3a;border:1px solid #1a1a1a;border-radius:4px 4px 0 0"></div>
<svg class="a" style="left:1095px;top:125px" width="185" height="62">
<defs>
<radialGradient id="sun" cx="0.5" cy="0.5" r="0.5"><stop offset="0" stop-color="#fff6a0"/><stop offset="0.5" stop-color="#f8c030"/><stop offset="1" stop-color="#d86a10"/></radialGradient>
<radialGradient id="sph" cx="0.4" cy="0.35" r="0.65"><stop offset="0" stop-color="#ffffff"/><stop offset="0.6" stop-color="#d8d8d8"/><stop offset="1" stop-color="#9a9a9a"/></radialGradient>
</defs>
<!-- create sun -->
<g stroke="#c84a20" stroke-width="0.9"><line x1="17.3" y1="7" x2="17.3" y2="21.5"/><line x1="10" y1="14.3" x2="24.5" y2="14.3"/><line x1="12.3" y1="9.3" x2="22.3" y2="19.3"/><line x1="22.3" y1="9.3" x2="12.3" y2="19.3"/></g>
<circle cx="17.3" cy="14.3" r="5" fill="url(#sun)"/>
<!-- modify -->
<rect x="38.5" y="6.5" width="16.5" height="16.5" fill="none" stroke="#c8c8c8" stroke-width="0.8"/>
<path d="M40.5 23 Q40.5 8.5 55 8.5" fill="none" stroke="#9ad0f4" stroke-width="2.2"/><path d="M43.5 23 Q43.5 11.5 55 11.5" fill="none" stroke="#3a88d0" stroke-width="2"/><path d="M46.5 23 Q46.5 14.5 55 14.5" fill="none" stroke="#6ab4ec" stroke-width="1.2"/>
<rect x="37" y="5" width="3" height="3" fill="#ddd"/><rect x="53.5" y="21.5" width="3" height="3" fill="#ddd"/>
<!-- hierarchy -->
<rect x="70" y="5" width="11" height="8.5" fill="#c8c8c8" stroke="#eee" stroke-width="0.5"/>
<g stroke="#ccc" stroke-width="0.8" fill="none"><path d="M75.5 13.5 V15.5 M68.5 18.5 L75.5 15.5 L82.5 18.5 M75.5 15.5 V18.5"/></g>
<rect x="66" y="18.7" width="5" height="5" fill="#c4c4c4"/><rect x="73" y="18.7" width="5" height="5" fill="#c4c4c4"/><rect x="80" y="18.7" width="5" height="5" fill="#c4c4c4"/>
<!-- motion -->
<circle cx="107" cy="14.3" r="7.2" fill="#888"/><circle cx="107" cy="14.3" r="5" fill="none" stroke="#eee" stroke-width="1.3"/><circle cx="107" cy="14.3" r="2.2" fill="none" stroke="#eee" stroke-width="1.2"/>
<path d="M97.5 8.5 Q95 14.3 97.5 20" fill="none" stroke="#777" stroke-width="1"/><path d="M95 9.5 Q93 14.3 95 19" fill="none" stroke="#555" stroke-width="0.8"/>
<!-- display -->
<rect x="124.3" y="6.4" width="19.5" height="13.6" fill="#e8e8e8" stroke="#888" stroke-width="0.6"/>
<rect x="130.5" y="9.5" width="7" height="7" fill="none" stroke="#222" stroke-width="1" rx="1.5"/>
<rect x="131" y="21" width="6" height="1.5" fill="#ccc"/><rect x="128" y="22.5" width="12" height="1.2" fill="#bbb"/>
<!-- utilities hammer -->
<path d="M154 22.5 L165 11.5" stroke="#c89a88" stroke-width="2.6" stroke-linecap="round"/>
<path d="M159 9 L165 6.5 L172 12.5 L170 14 L165.5 11.5 L162 13 Z" fill="#aab0b4" stroke="#667" stroke-width="0.5"/>
<!-- sub icons -->
<rect x="12.7" y="36" width="22" height="20.5" fill="#4a88d6" stroke="#0c1a30" stroke-width="1"/>
<circle cx="24.7" cy="47" r="7.3" fill="url(#sph)"/>
<circle cx="45.5" cy="44.7" r="5" fill="#c8c8c8" stroke="#eee" stroke-width="0.6"/><rect x="46" y="45.4" width="9.6" height="9.4" fill="#d0d0d0" stroke="#f0f0f0" stroke-width="0.6"/>
<path d="M66 47.5 L75 40 L79 44 L74 52.5 Z" fill="#d8d8d8" stroke="#888" stroke-width="0.5"/><path d="M66 47.5 Q68 53 74 52.5" fill="#f4e8a0" stroke="#a89040" stroke-width="0.6"/><rect x="76" y="38.5" width="3" height="3" fill="#bbb"/>
<rect x="89" y="39.6" width="11" height="7.5" rx="1.5" fill="#e4e4e4"/><rect x="91" y="41.5" width="2.5" height="2.5" fill="#333"/><rect x="96" y="41.5" width="2.5" height="2.5" fill="#333"/>
<rect x="89.5" y="48" width="9" height="5" fill="#ddd"/><path d="M99 48.5 L104 46.5 V53.5 L99 51.5 Z" fill="#ccc"/><rect x="90" y="53" width="7" height="1" fill="#aaa"/>
<rect x="112.5" y="42" width="13" height="10.5" rx="2.5" fill="#d8d8d8" stroke="#999" stroke-width="0.6"/><circle cx="118" cy="47.2" r="3" fill="none" stroke="#666" stroke-width="1"/><path d="M125.5 52.5 H128" stroke="#bbb"/>
<g fill="none" stroke="#cfcfcf" stroke-width="1.1"><path d="M136 41.5 q2 -2.5 4 0 t4 0 t4 0 t4 0"/><path d="M136 46 q2 -2.5 4 0 t4 0 t4 0 t4 0"/><path d="M136 50.5 q2 -2.5 4 0 t4 0 t4 0 t4 0"/></g>
<circle cx="164.5" cy="43.5" r="3.6" fill="#e8e8e8"/><circle cx="170" cy="49.5" r="3.6" fill="#bbb"/>
<g stroke="#e8e8e8" stroke-width="0.8"><line x1="164.5" y1="38.5" x2="164.5" y2="48.5"/><line x1="159.5" y1="43.5" x2="169.5" y2="43.5"/></g>
<g stroke="#bbb" stroke-width="0.8"><line x1="170" y1="44.5" x2="170" y2="54.5"/><line x1="165" y1="49.5" x2="175" y2="49.5"/></g>
</svg>
<div class="a" style="left:1107px;top:189px;width:163px;height:20px;background:#4c4c4c;border-top:1px solid #161616;border-left:1px solid #161616;border-bottom:1px solid #333;border-right:1px solid #333"></div>
<div class="t" style="left:1111px;top:194px;font-size:10.5px;color:#e4e4e4">Standard Primitives</div>
<div class="a wbtn" style="left:1253px;top:191px;width:15px;height:16px"><div class="darr"></div></div>
<div class="a" style="left:1100px;top:217px;width:180px;height:1px;background:#2c2c2c"></div>
<div class="a" style="left:1101px;top:218px;width:179px;height:1px;background:#555"></div>
<!-- Object Type rollout -->
<div class="a" style="left:1105px;top:230px;width:164px;height:134px;border:1px solid #262626;border-top:none;border-right-color:#262626;box-shadow:1px 0 0 #5a5a5a"></div>
<div class="a" style="left:1108px;top:222px;width:158px;height:16px;background:#474747;border:1px solid #5e5e5e;border-bottom-color:#2a2a2a;border-right-color:#2a2a2a"></div>
<div class="t" style="left:1113px;top:225px;font-size:11px;color:#e8e8e8">-</div>
<div class="t" style="left:1158px;top:225px;font-size:11px;color:#ececec">Object Type</div>
<div class="a" style="left:1139px;top:242px;width:12px;height:12px;border:1px solid #1e1e1e;border-right-color:#555;border-bottom-color:#555;background:#444"></div>
<div class="t" style="left:1162px;top:243px;font-size:11px;color:#cfcfcf">AutoGrid</div>
<div class="a btn3" style="left:1114px;top:258px;width:69px;height:18px"></div><div class="t" style="left:1114px;top:262px;width:69px;text-align:center;font-size:11px;color:#dedede">Box</div>
<div class="a btn3" style="left:1192px;top:258px;width:69px;height:18px"></div><div class="t" style="left:1192px;top:262px;width:69px;text-align:center;font-size:11px;color:#dedede">Cone</div>
<div class="a btn3" style="left:1114px;top:279px;width:69px;height:18px"></div><div class="t" style="left:1114px;top:283px;width:69px;text-align:center;font-size:11px;color:#dedede">Sphere</div>
<div class="a btn3" style="left:1192px;top:279px;width:69px;height:18px"></div><div class="t" style="left:1192px;top:283px;width:69px;text-align:center;font-size:11px;color:#dedede">GeoSphere</div>
<div class="a btn3" style="left:1114px;top:300px;width:69px;height:18px"></div><div class="t" style="left:1114px;top:304px;width:69px;text-align:center;font-size:11px;color:#dedede">Cylinder</div>
<div class="a btn3" style="left:1192px;top:300px;width:69px;height:18px"></div><div class="t" style="left:1192px;top:304px;width:69px;text-align:center;font-size:11px;color:#dedede">Tube</div>
<div class="a btn3" style="left:1114px;top:321px;width:69px;height:18px"></div><div class="t" style="left:1114px;top:325px;width:69px;text-align:center;font-size:11px;color:#dedede">Torus</div>
<div class="a btn3" style="left:1192px;top:321px;width:69px;height:18px"></div><div class="t" style="left:1192px;top:325px;width:69px;text-align:center;font-size:11px;color:#dedede">Pyramid</div>
<div class="a btn3" style="left:1114px;top:342px;width:69px;height:18px"></div><div class="t" style="left:1114px;top:346px;width:69px;text-align:center;font-size:11px;color:#dedede">Teapot</div>
<div class="a btn3" style="left:1192px;top:342px;width:69px;height:18px"></div><div class="t" style="left:1192px;top:346px;width:69px;text-align:center;font-size:11px;color:#dedede">Plane</div>
<!-- Name and Color rollout -->
<div class="a" style="left:1105px;top:379px;width:164px;height:46px;border:1px solid #262626;border-top:none;box-shadow:1px 0 0 #5a5a5a"></div>
<div class="a" style="left:1108px;top:371px;width:158px;height:16px;background:#474747;border:1px solid #5e5e5e;border-bottom-color:#2a2a2a;border-right-color:#2a2a2a"></div>
<div class="t" style="left:1113px;top:374px;font-size:11px;color:#e8e8e8">-</div>
<div class="t" style="left:1149px;top:374px;font-size:11px;color:#ececec">Name and Color</div>
<div class="a" style="left:1112px;top:394px;width:132px;height:20px;background:#4e4e4e;border:2px solid #1a1a1a;border-right-color:#3a3a3a;border-bottom-color:#3a3a3a"></div>
<div class="a" style="left:1247px;top:395px;width:17px;height:19px;background:#fff;border:1px solid #222"></div>
<div class="a" style="left:1273px;top:219px;width:1px;height:445px;background:#3a3a3a"></div>
<div class="a" style="left:1097px;top:663px;width:177px;height:1px;background:#3a3a3a"></div>
<div class="a" style="left:1096px;top:668px;width:184px;height:1px;background:#1c1c1c"></div>
<div class="a" style="left:40px;top:612px;width:1056px;height:19px;background:#454545"></div>
<div class="a" style="left:40px;top:613px;width:15px;height:16px;background:#3a3a3a"></div>
<svg class="a" style="left:43px;top:617px" width="10" height="11"><path d="M8 1.5 L2 5.5 L8 9.5" fill="none" stroke="#d8d8d8" stroke-width="1"/></svg>
<div class="a" style="left:57px;top:628px;width:123px;height:2px;background:#0c0c0c"></div>
<div class="a" style="left:197px;top:630px;width:898px;height:1px;background:#161616"></div>
<div class="a" style="left:1094px;top:630px;width:1px;height:1px;background:#ddd"></div>
<div class="a" style="left:180px;top:623px;width:17px;height:8px;background:#3c3c3c;border-bottom:1px solid #2a2a2a"></div>
<div class="a" style="left:102px;top:624px;width:3px;height:1.5px;background:#ddd"></div>
<div class="a" style="left:109.5px;top:624px;width:1px;height:3.5px;background:#ddd"></div>
<div class="a" style="left:118px;top:624px;width:3px;height:1.5px;background:#ddd"></div>
<div class="a" style="left:123.5px;top:624px;width:3px;height:1.5px;background:#ddd"></div>
<div class="a" style="left:129.5px;top:624px;width:3px;height:1.5px;background:#ddd"></div>
<div class="a" style="left:187.5px;top:624px;width:1px;height:1.5px;background:#ccc"></div>
<div class="a" style="left:39px;top:630px;width:1057px;height:2px;background:#3a3a3a"></div>
<div class="a" style="left:90px;top:632px;width:956px;height:26px;background:#2d2d2d"></div>
<div class="a" style="left:90px;top:657px;width:956px;height:1px;background:#3c3c3c"></div>
<div class="a" style="left:90px;top:658px;width:956px;height:11px;background:#323232"></div>
<svg class="a" style="left:0;top:620px" width="1280" height="60">
<line x1="94.5" y1="12" x2="94.5" y2="26" stroke="#9a9a9a" stroke-width="1"/>
<line x1="94.5" y1="34" x2="94.5" y2="38" stroke="#9a9a9a" stroke-width="1"/>
<line x1="103.5" y1="12" x2="103.5" y2="24" stroke="#9a9a9a" stroke-width="1"/>
<line x1="113.5" y1="12" x2="113.5" y2="24" stroke="#9a9a9a" stroke-width="1"/>
<line x1="122.5" y1="12" x2="122.5" y2="24" stroke="#9a9a9a" stroke-width="1"/>
<line x1="132.5" y1="12" x2="132.5" y2="24" stroke="#9a9a9a" stroke-width="1"/>
<line x1="141.5" y1="12" x2="141.5" y2="26" stroke="#9a9a9a" stroke-width="1"/>
<line x1="141.5" y1="34" x2="141.5" y2="38" stroke="#9a9a9a" stroke-width="1"/>
<line x1="151.5" y1="12" x2="151.5" y2="24" stroke="#9a9a9a" stroke-width="1"/>
<line x1="160.5" y1="12" x2="160.5" y2="24" stroke="#9a9a9a" stroke-width="1"/>
<line x1="170.5" y1="12" x2="170.5" y2="24" stroke="#9a9a9a" stroke-width="1"/>
<line x1="179.5" y1="12" x2="179.5" y2="24" stroke="#9a9a9a" stroke-width="1"/>
<line x1="189.5" y1="12" x2="189.5" y2="26" stroke="#9a9a9a" stroke-width="1"/>
<line x1="189.5" y1="34" x2="189.5" y2="38" stroke="#9a9a9a" stroke-width="1"/>
<line x1="198.5" y1="12" x2="198.5" y2="24" stroke="#9a9a9a" stroke-width="1"/>
<line x1="208.5" y1="12" x2="208.5" y2="24" stroke="#9a9a9a" stroke-width="1"/>
<line x1="217.5" y1="12" x2="217.5" y2="24" stroke="#9a9a9a" stroke-width="1"/>
<line x1="227.5" y1="12" x2="227.5" y2="24" stroke="#9a9a9a" stroke-width="1"/>
<line x1="236.5" y1="12" x2="236.5" y2="26" stroke="#9a9a9a" stroke-width="1"/>
<line x1="236.5" y1="34" x2="236.5" y2="38" stroke="#9a9a9a" stroke-width="1"/>
<line x1="246.5" y1="12" x2="246.5" y2="24" stroke="#9a9a9a" stroke-width="1"/>
<line x1="255.5" y1="12" x2="255.5" y2="24" stroke="#9a9a9a" stroke-width="1"/>
<line x1="265.5" y1="12" x2="265.5" y2="24" stroke="#9a9a9a" stroke-width="1"/>
<line x1="274.5" y1="12" x2="274.5" y2="24" stroke="#9a9a9a" stroke-width="1"/>
<line x1="284.5" y1="12" x2="284.5" y2="26" stroke="#9a9a9a" stroke-width="1"/>
<line x1="284.5" y1="34" x2="284.5" y2="38" stroke="#9a9a9a" stroke-width="1"/>
<line x1="293.5" y1="12" x2="293.5" y2="24" stroke="#9a9a9a" stroke-width="1"/>
<line x1="303.5" y1="12" x2="303.5" y2="24" stroke="#9a9a9a" stroke-width="1"/>
<line x1="312.5" y1="12" x2="312.5" y2="24" stroke="#9a9a9a" stroke-width="1"/>
<line x1="322.5" y1="12" x2="322.5" y2="24" stroke="#9a9a9a" stroke-width="1"/>
<line x1="331.5" y1="12" x2="331.5" y2="26" stroke="#9a9a9a" stroke-width="1"/>
<line x1="331.5" y1="34" x2="331.5" y2="38" stroke="#9a9a9a" stroke-width="1"/>
<line x1="341.5" y1="12" x2="341.5" y2="24" stroke="#9a9a9a" stroke-width="1"/>
<line x1="350.5" y1="12" x2="350.5" y2="24" stroke="#9a9a9a" stroke-width="1"/>
<line x1="359.5" y1="12" x2="359.5" y2="24" stroke="#9a9a9a" stroke-width="1"/>
<line x1="369.5" y1="12" x2="369.5" y2="24" stroke="#9a9a9a" stroke-width="1"/>
<line x1="378.5" y1="12" x2="378.5" y2="26" stroke="#9a9a9a" stroke-width="1"/>
<line x1="378.5" y1="34" x2="378.5" y2="38" stroke="#9a9a9a" stroke-width="1"/>
<line x1="388.5" y1="12" x2="388.5" y2="24" stroke="#9a9a9a" stroke-width="1"/>
<line x1="397.5" y1="12" x2="397.5" y2="24" stroke="#9a9a9a" stroke-width="1"/>
<line x1="407.5" y1="12" x2="407.5" y2="24" stroke="#9a9a9a" stroke-width="1"/>
<line x1="416.5" y1="12" x2="416.5" y2="24" stroke="#9a9a9a" stroke-width="1"/>
<line x1="426.5" y1="12" x2="426.5" y2="26" stroke="#9a9a9a" stroke-width="1"/>
<line x1="426.5" y1="34" x2="426.5" y2="38" stroke="#9a9a9a" stroke-width="1"/>
<line x1="435.5" y1="12" x2="435.5" y2="24" stroke="#9a9a9a" stroke-width="1"/>
<line x1="445.5" y1="12" x2="445.5" y2="24" stroke="#9a9a9a" stroke-width="1"/>
<line x1="454.5" y1="12" x2="454.5" y2="24" stroke="#9a9a9a" stroke-width="1"/>
<line x1="464.5" y1="12" x2="464.5" y2="24" stroke="#9a9a9a" stroke-width="1"/>
<line x1="473.5" y1="12" x2="473.5" y2="26" stroke="#9a9a9a" stroke-width="1"/>
<line x1="473.5" y1="34" x2="473.5" y2="38" stroke="#9a9a9a" stroke-width="1"/>
<line x1="483.5" y1="12" x2="483.5" y2="24" stroke="#9a9a9a" stroke-width="1"/>
<line x1="492.5" y1="12" x2="492.5" y2="24" stroke="#9a9a9a" stroke-width="1"/>
<line x1="502.5" y1="12" x2="502.5" y2="24" stroke="#9a9a9a" stroke-width="1"/>
<line x1="511.5" y1="12" x2="511.5" y2="24" stroke="#9a9a9a" stroke-width="1"/>
<line x1="521.5" y1="12" x2="521.5" y2="26" stroke="#9a9a9a" stroke-width="1"/>
<line x1="521.5" y1="34" x2="521.5" y2="38" stroke="#9a9a9a" stroke-width="1"/>
<line x1="530.5" y1="12" x2="530.5" y2="24" stroke="#9a9a9a" stroke-width="1"/>
<line x1="540.5" y1="12" x2="540.5" y2="24" stroke="#9a9a9a" stroke-width="1"/>
<line x1="549.5" y1="12" x2="549.5" y2="24" stroke="#9a9a9a" stroke-width="1"/>
<line x1="559.5" y1="12" x2="559.5" y2="24" stroke="#9a9a9a" stroke-width="1"/>
<line x1="568.5" y1="12" x2="568.5" y2="26" stroke="#9a9a9a" stroke-width="1"/>
<line x1="568.5" y1="34" x2="568.5" y2="38" stroke="#9a9a9a" stroke-width="1"/>
<line x1="578.5" y1="12" x2="578.5" y2="24" stroke="#9a9a9a" stroke-width="1"/>
<line x1="587.5" y1="12" x2="587.5" y2="24" stroke="#9a9a9a" stroke-width="1"/>
<line x1="597.5" y1="12" x2="597.5" y2="24" stroke="#9a9a9a" stroke-width="1"/>
<line x1="606.5" y1="12" x2="606.5" y2="24" stroke="#9a9a9a" stroke-width="1"/>
<line x1="616.5" y1="12" x2="616.5" y2="26" stroke="#9a9a9a" stroke-width="1"/>
<line x1="616.5" y1="34" x2="616.5" y2="38" stroke="#9a9a9a" stroke-width="1"/>
<line x1="625.5" y1="12" x2="625.5" y2="24" stroke="#9a9a9a" stroke-width="1"/>
<line x1="635.5" y1="12" x2="635.5" y2="24" stroke="#9a9a9a" stroke-width="1"/>
<line x1="644.5" y1="12" x2="644.5" y2="24" stroke="#9a9a9a" stroke-width="1"/>
<line x1="654.5" y1="12" x2="654.5" y2="24" stroke="#9a9a9a" stroke-width="1"/>
<line x1="663.5" y1="12" x2="663.5" y2="26" stroke="#9a9a9a" stroke-width="1"/>
<line x1="663.5" y1="34" x2="663.5" y2="38" stroke="#9a9a9a" stroke-width="1"/>
<line x1="672.5" y1="12" x2="672.5" y2="24" stroke="#9a9a9a" stroke-width="1"/>
<line x1="682.5" y1="12" x2="682.5" y2="24" stroke="#9a9a9a" stroke-width="1"/>
<line x1="691.5" y1="12" x2="691.5" y2="24" stroke="#9a9a9a" stroke-width="1"/>
<line x1="701.5" y1="12" x2="701.5" y2="24" stroke="#9a9a9a" stroke-width="1"/>
<line x1="710.5" y1="12" x2="710.5" y2="26" stroke="#9a9a9a" stroke-width="1"/>
<line x1="710.5" y1="34" x2="710.5" y2="38" stroke="#9a9a9a" stroke-width="1"/>
<line x1="720.5" y1="12" x2="720.5" y2="24" stroke="#9a9a9a" stroke-width="1"/>
<line x1="729.5" y1="12" x2="729.5" y2="24" stroke="#9a9a9a" stroke-width="1"/>
<line x1="739.5" y1="12" x2="739.5" y2="24" stroke="#9a9a9a" stroke-width="1"/>
<line x1="748.5" y1="12" x2="748.5" y2="24" stroke="#9a9a9a" stroke-width="1"/>
<line x1="758.5" y1="12" x2="758.5" y2="26" stroke="#9a9a9a" stroke-width="1"/>
<line x1="758.5" y1="34" x2="758.5" y2="38" stroke="#9a9a9a" stroke-width="1"/>
<line x1="767.5" y1="12" x2="767.5" y2="24" stroke="#9a9a9a" stroke-width="1"/>
<line x1="777.5" y1="12" x2="777.5" y2="24" stroke="#9a9a9a" stroke-width="1"/>
<line x1="786.5" y1="12" x2="786.5" y2="24" stroke="#9a9a9a" stroke-width="1"/>
<line x1="796.5" y1="12" x2="796.5" y2="24" stroke="#9a9a9a" stroke-width="1"/>
<line x1="805.5" y1="12" x2="805.5" y2="26" stroke="#9a9a9a" stroke-width="1"/>
<line x1="805.5" y1="34" x2="805.5" y2="38" stroke="#9a9a9a" stroke-width="1"/>
<line x1="815.5" y1="12" x2="815.5" y2="24" stroke="#9a9a9a" stroke-width="1"/>
<line x1="824.5" y1="12" x2="824.5" y2="24" stroke="#9a9a9a" stroke-width="1"/>
<line x1="834.5" y1="12" x2="834.5" y2="24" stroke="#9a9a9a" stroke-width="1"/>
<line x1="843.5" y1="12" x2="843.5" y2="24" stroke="#9a9a9a" stroke-width="1"/>
<line x1="853.5" y1="12" x2="853.5" y2="26" stroke="#9a9a9a" stroke-width="1"/>
<line x1="853.5" y1="34" x2="853.5" y2="38" stroke="#9a9a9a" stroke-width="1"/>
<line x1="862.5" y1="12" x2="862.5" y2="24" stroke="#9a9a9a" stroke-width="1"/>
<line x1="872.5" y1="12" x2="872.5" y2="24" stroke="#9a9a9a" stroke-width="1"/>
<line x1="881.5" y1="12" x2="881.5" y2="24" stroke="#9a9a9a" stroke-width="1"/>
<line x1="891.5" y1="12" x2="891.5" y2="24" stroke="#9a9a9a" stroke-width="1"/>
<line x1="900.5" y1="12" x2="900.5" y2="26" stroke="#9a9a9a" stroke-width="1"/>
<line x1="900.5" y1="34" x2="900.5" y2="38" stroke="#9a9a9a" stroke-width="1"/>
<line x1="910.5" y1="12" x2="910.5" y2="24" stroke="#9a9a9a" stroke-width="1"/>
<line x1="919.5" y1="12" x2="919.5" y2="24" stroke="#9a9a9a" stroke-width="1"/>
<line x1="929.5" y1="12" x2="929.5" y2="24" stroke="#9a9a9a" stroke-width="1"/>
<line x1="938.5" y1="12" x2="938.5" y2="24" stroke="#9a9a9a" stroke-width="1"/>
<line x1="948.5" y1="12" x2="948.5" y2="26" stroke="#9a9a9a" stroke-width="1"/>
<line x1="948.5" y1="34" x2="948.5" y2="38" stroke="#9a9a9a" stroke-width="1"/>
<line x1="957.5" y1="12" x2="957.5" y2="24" stroke="#9a9a9a" stroke-width="1"/>
<line x1="967.5" y1="12" x2="967.5" y2="24" stroke="#9a9a9a" stroke-width="1"/>
<line x1="976.5" y1="12" x2="976.5" y2="24" stroke="#9a9a9a" stroke-width="1"/>
<line x1="985.5" y1="12" x2="985.5" y2="24" stroke="#9a9a9a" stroke-width="1"/>
<line x1="995.5" y1="12" x2="995.5" y2="26" stroke="#9a9a9a" stroke-width="1"/>
<line x1="995.5" y1="34" x2="995.5" y2="38" stroke="#9a9a9a" stroke-width="1"/>
<line x1="1004.5" y1="12" x2="1004.5" y2="24" stroke="#9a9a9a" stroke-width="1"/>
<line x1="1014.5" y1="12" x2="1014.5" y2="24" stroke="#9a9a9a" stroke-width="1"/>
<line x1="1023.5" y1="12" x2="1023.5" y2="24" stroke="#9a9a9a" stroke-width="1"/>
<line x1="1033.5" y1="12" x2="1033.5" y2="24" stroke="#9a9a9a" stroke-width="1"/>
<line x1="1042.5" y1="12" x2="1042.5" y2="26" stroke="#9a9a9a" stroke-width="1"/>
<line x1="1042.5" y1="34" x2="1042.5" y2="38" stroke="#9a9a9a" stroke-width="1"/>
<rect x="90.5" y="13" width="8" height="24.5" fill="#8a8628"/>
<line x1="94.5" y1="13" x2="94.5" y2="26" stroke="#b8b850"/>
<text x="94.5" y="34.5" text-anchor="middle" font-family="Liberation Sans" font-size="10.5" fill="#e8e870">0</text>
<text x="141.5" y="34.5" text-anchor="middle" font-family="Liberation Sans" font-size="10.5" fill="#d8d8d8">5</text>
<text x="189.5" y="34.5" text-anchor="middle" font-family="Liberation Sans" font-size="10.5" fill="#d8d8d8">10</text>
<text x="236.5" y="34.5" text-anchor="middle" font-family="Liberation Sans" font-size="10.5" fill="#d8d8d8">15</text>
<text x="284.5" y="34.5" text-anchor="middle" font-family="Liberation Sans" font-size="10.5" fill="#d8d8d8">20</text>
<text x="331.5" y="34.5" text-anchor="middle" font-family="Liberation Sans" font-size="10.5" fill="#d8d8d8">25</text>
<text x="378.5" y="34.5" text-anchor="middle" font-family="Liberation Sans" font-size="10.5" fill="#d8d8d8">30</text>
<text x="426.5" y="34.5" text-anchor="middle" font-family="Liberation Sans" font-size="10.5" fill="#d8d8d8">35</text>
<text x="473.5" y="34.5" text-anchor="middle" font-family="Liberation Sans" font-size="10.5" fill="#d8d8d8">40</text>
<text x="521.5" y="34.5" text-anchor="middle" font-family="Liberation Sans" font-size="10.5" fill="#d8d8d8">45</text>
<text x="568.5" y="34.5" text-anchor="middle" font-family="Liberation Sans" font-size="10.5" fill="#d8d8d8">50</text>
<text x="616.5" y="34.5" text-anchor="middle" font-family="Liberation Sans" font-size="10.5" fill="#d8d8d8">55</text>
<text x="663.5" y="34.5" text-anchor="middle" font-family="Liberation Sans" font-size="10.5" fill="#d8d8d8">60</text>
<text x="710.5" y="34.5" text-anchor="middle" font-family="Liberation Sans" font-size="10.5" fill="#d8d8d8">65</text>
<text x="758.5" y="34.5" text-anchor="middle" font-family="Liberation Sans" font-size="10.5" fill="#d8d8d8">70</text>
<text x="805.5" y="34.5" text-anchor="middle" font-family="Liberation Sans" font-size="10.5" fill="#d8d8d8">75</text>
<text x="853.5" y="34.5" text-anchor="middle" font-family="Liberation Sans" font-size="10.5" fill="#d8d8d8">80</text>
<text x="900.5" y="34.5" text-anchor="middle" font-family="Liberation Sans" font-size="10.5" fill="#d8d8d8">85</text>
<text x="948.5" y="34.5" text-anchor="middle" font-family="Liberation Sans" font-size="10.5" fill="#d8d8d8">90</text>
<text x="995.5" y="34.5" text-anchor="middle" font-family="Liberation Sans" font-size="10.5" fill="#d8d8d8">95</text>
<text x="1042.5" y="34.5" text-anchor="middle" font-family="Liberation Sans" font-size="10.5" fill="#d8d8d8">100</text>
<g fill="none" stroke="#ddd" stroke-width="1"><rect x="53.5" y="23.5" width="16" height="5"/><rect x="53.5" y="34.5" width="16" height="3"/><path d="M57 33 V29 M55.5 30.5 L57 29 L58.5 30.5 M66 29 V33 M64.5 31.5 L66 33 L67.5 31.5"/><path d="M55 26 q3 -2 6 0 t6 0"/></g>
</svg>
<div class="a" style="left:5px;top:623px;width:35px;height:44px;background:linear-gradient(#5a80ae,#4a86cc 60%,#3a8ae4);border-radius:4px 0 0 4px"></div>
<div class="a" style="left:8px;top:630px;width:30px;height:28px;background:#2a3a52"></div>
<div class="a" style="left:9px;top:631px;width:13px;height:12px;background:#6a7078"></div>
<div class="a" style="left:24px;top:631px;width:13px;height:12px;background:#6a7078"></div>
<div class="a" style="left:9px;top:645px;width:13px;height:12px;background:#6a7078"></div>
<div class="a" style="left:24px;top:645px;width:13px;height:12px;background:#6a7078"></div><!-- STATUS BAR -->
<div class="a" style="left:0;top:669px;width:1280px;height:51px;background:#444"></div>
<div class="a" style="left:1px;top:671px;width:98px;height:25px;background:#dcc9c9;border:2px solid #f0f0f0;border-right-color:#ccc"></div>
<div class="a" style="left:1px;top:695px;width:98px;height:24px;background:#fff;border:1px solid #ccc"></div>
<div class="t" style="left:7px;top:699px;font-family:'Liberation Mono',monospace;font-size:12px;color:#000;font-weight:normal;-webkit-text-stroke:0.3px #000">Welcome to M</div>
<div class="a" style="left:102px;top:670px;width:2px;height:50px;background:#2a2a2a"></div>
<div class="a" style="left:107px;top:675px;width:300px;height:20px;background:#494949;border-top:1px solid #202020;border-left:1px solid #202020;border-right:1px solid #555;border-bottom:1px solid #555"></div>
<div class="t" style="left:112px;top:680px;font-size:10.6px;color:#d6d6d6">None Selected</div>
<div class="a" style="left:107px;top:700px;width:604px;height:20px;background:#494949;border-top:1px solid #202020;border-left:1px solid #202020"></div>
<div class="t" style="left:112px;top:705px;font-size:10.7px;color:#d6d6d6">Click or click-and-drag to select objects</div>
<svg class="a" style="left:410px;top:672px" width="80" height="26">
<ellipse cx="11" cy="8" rx="5" ry="6" fill="#bbb"/><rect x="9.5" y="13" width="3" height="6" fill="#999"/>
<path d="M34 11 V8 Q34 4 37.5 4 Q41 4 41 8 V11" fill="none" stroke="#aaa" stroke-width="1.5"/><rect x="32" y="11" width="11" height="8" fill="#aaa"/><rect x="36.5" y="13" width="2" height="4" fill="#555"/>
<rect x="58" y="6" width="13" height="13" fill="#e8e8e8"/><circle cx="64.5" cy="12.5" r="3.5" fill="none" stroke="#555" stroke-width="1.5"/>
</svg>
<div class="t" style="left:491px;top:680px;font-size:11px;color:#ccc">X:</div>
<div class="a" style="left:501px;top:674px;width:58px;height:21px;background:#4d4d4d;border:2px solid #1a1a1a;border-right-color:#3a3a3a;border-bottom-color:#3a3a3a"></div>
<div class="t" style="left:572px;top:680px;font-size:11px;color:#ccc">Y:</div>
<div class="a" style="left:583px;top:674px;width:58px;height:21px;background:#4d4d4d;border:2px solid #1a1a1a;border-right-color:#3a3a3a;border-bottom-color:#3a3a3a"></div>
<div class="t" style="left:654px;top:680px;font-size:11px;color:#ccc">Z:</div>
<div class="a" style="left:665px;top:674px;width:58px;height:21px;background:#4d4d4d;border:2px solid #1a1a1a;border-right-color:#3a3a3a;border-bottom-color:#3a3a3a"></div>
<div class="a" style="left:737px;top:674px;width:100px;height:20px;background:#494949;border-top:1px solid #202020;border-left:1px solid #202020;border-bottom:1px solid #555;border-right:1px solid #555"></div>
<div class="t" style="left:742px;top:680px;font-size:11px;color:#d6d6d6">Grid = 10,0cm</div>
<div class="a" style="left:713px;top:700px;width:20px;height:20px;background:#4a8ad6;border:1px solid #1c3c70"></div>
<div class="a" style="left:717px;top:704px;width:12px;height:12px;border:2px solid #eee;border-radius:2px"></div>
<div class="a" style="left:737px;top:699px;width:100px;height:21px;background:#494949;border-top:1px solid #202020;border-left:1px solid #202020"></div>
<div class="t" style="left:742px;top:705px;font-size:11px;color:#d6d6d6">Add Time Tag</div>
<div class="a btn3" style="left:840px;top:673px;width:44px;height:44px"></div>
<svg class="a" style="left:845px;top:685px" width="36" height="20"><circle cx="7" cy="9" r="4.5" fill="none" stroke="#000" stroke-width="2.2"/><path d="M11 9 H28 M22 9 V13 M26 9 V13" stroke="#000" stroke-width="2.5"/></svg>
<div class="a btn3" style="left:888px;top:673px;width:46px;height:22px"></div>
<div class="t" style="left:888px;top:680px;width:46px;text-align:center;font-size:11px;color:#dedede">Auto Key</div>
<div class="a btn3" style="left:888px;top:695px;width:46px;height:22px"></div>
<div class="t" style="left:888px;top:702px;width:46px;text-align:center;font-size:11px;color:#dedede">Set Key</div>
<div class="a" style="left:938px;top:673px;width:114px;height:21px;background:#4c4c4c;border-top:2px solid #161616;border-left:2px solid #161616"></div>
<div class="t" style="left:941px;top:679px;font-size:11px;color:#e8e8e8">Selected</div>
<div class="a wbtn" style="left:1035px;top:675px;width:15px;height:17px"><div class="darr"></div></div>
<svg class="a" style="left:938px;top:696px" width="24" height="22"><path d="M3 17 Q7 2 10 10 T17 5" fill="none" stroke="#d04040" stroke-width="1.5"/><path d="M3 12 L17 12" stroke="#4060c0" stroke-width="1"/><path d="M18 19 L21 16" stroke="#fff" stroke-width="1.5"/></svg>
<div class="a btn3" style="left:964px;top:695px;width:90px;height:22px"></div>
<div class="t" style="left:964px;top:702px;width:90px;text-align:center;font-size:11px;color:#dedede">Key Filters...</div>
<!-- playback -->
<svg class="a" style="left:1056px;top:670px" width="224" height="50">
<g fill="none" stroke="#d8d8d8" stroke-width="1.3" stroke-linejoin="round">
<path d="M6.5 7 V19 M20.5 7 V19 M8.5 13 L14 8.5 V17.5 Z M14 13 L19.5 8.5 V17.5 Z"/>
<path d="M33 13 L39 8.5 V17.5 Z M41.5 8.5 V17.5 M44.5 8.5 V17.5 M47.5 8.5 V17.5"/>
<path d="M58 8 L67 13 L58 18 Z"/>
<path d="M79 8.5 V17.5 M82 8.5 V17.5 M85 8.5 V17.5 M88 8.5 L94 13 L88 17.5 Z"/>
<path d="M105 7 V19 M119 7 V19 M106.5 8.5 L112 13 L106.5 17.5 Z M112 8.5 L117.5 13 L112 17.5 Z"/>
<path d="M6.5 27 V38 M21.5 27 V38 M8.5 28.5 L13.5 32.5 L8.5 36.5 Z M19.5 28.5 L14.5 32.5 L19.5 36.5 Z"/>
<path d="M136 27 L149 32.5 L136 38 M141 29 Q138.5 32.5 141 36"/>
</g>
<path d="M70 22 L73 19" stroke="#fff" stroke-width="1.5"/>
<g stroke="#111" stroke-width="1.5"><line x1="27.5" y1="6" x2="27.5" y2="21"/><line x1="100" y1="6" x2="100" y2="21"/><line x1="128.5" y1="6" x2="128.5" y2="21"/><line x1="28" y1="26" x2="28" y2="41"/><line x1="107" y1="26" x2="107" y2="41"/><line x1="128.5" y1="26" x2="128.5" y2="41"/></g>
<circle cx="140" cy="12" r="4.5" fill="#e4e4e4" stroke="#999" stroke-width="0.6"/><path d="M143 15 L147 19" stroke="#bbb" stroke-width="2.2"/><text x="146" y="10" font-size="8" fill="#ddd" font-family="Liberation Sans">±</text>
<rect x="158" y="7" width="6" height="6" fill="#ddd"/><rect x="165" y="7" width="6" height="6" fill="#ddd"/><rect x="158" y="14" width="6" height="6" fill="#ddd"/><circle cx="168" cy="17" r="3" fill="none" stroke="#ddd" stroke-width="1.2"/>
<path d="M180 10 V7 H183 M196 7 V10 M180 17 V20 H183 M193 20 H196 V17" stroke="#ddd" fill="none"/><rect x="185" y="10" width="7" height="7" fill="#7ab060"/>
<rect x="211" y="7" width="5" height="5" fill="#ddd"/><rect x="217" y="7" width="5" height="5" fill="#ddd"/><rect x="217" y="13" width="5" height="5" fill="#ddd"/><rect x="203" y="13" width="8" height="8" fill="#7ab060"/>
<rect x="112" y="26" width="13" height="14" fill="#e8e8e8"/><rect x="113.5" y="27.5" width="6" height="5" fill="#3a6ab0"/><circle cx="123" cy="37" r="3.5" fill="#fff" stroke="#333"/>
<path d="M160 39 V31 M163 39 V28 M166 39 V28 M169 39 V30 M157 34 L160 39 H169 L172 33" stroke="#eee" stroke-width="2" fill="none"/>
<circle cx="188" cy="34" r="5" fill="none" stroke="#ddd"/><path d="M186 28 L192 32 L185 34 Z" fill="#7ab060"/>
<rect x="203" y="26" width="13" height="13" fill="#e6e6e6"/><path d="M206 29 L213 36 M206 29 V33 M206 29 H210" stroke="#222" stroke-width="1.5"/>
</svg>
<div class="a" style="left:1086px;top:697px;width:62px;height:19px;background:#4c4c4c;border-top:2px solid #161616;border-left:2px solid #161616"></div>
<div class="t" style="left:1090px;top:702px;font-size:11px;color:#ddd">0</div>
<div class="a" style="left:1150px;top:697px;width:11px;height:17px;border:1px solid #333;background:#444"></div>
<svg class="a" style="left:1150px;top:697px" width="11" height="17"><path d="M2.5 7 L5.5 3.5 L8.5 7 Z M2.5 10 L5.5 13.5 L8.5 10 Z" fill="#aaa"/></svg>
<!-- DIALOG -->
<div class="a" style="left:97px;top:0;width:707px;height:624px;background:#d4d0c8;border-top:1px solid #d4d0c8;border-left:1px solid #d4d0c8;border-right:1px solid #404040;border-bottom:1px solid #404040"></div>
<div class="a" style="left:98px;top:1px;width:705px;height:622px;border-top:1px solid #fff;border-left:1px solid #fff;border-right:1px solid #808080;border-bottom:1px solid #808080"></div>
<div class="a" style="left:101px;top:4px;width:699px;height:18px;background:linear-gradient(to right,#0a246a,#a6caf0)"></div>
<div class="a" style="left:101px;top:23px;width:699px;height:597px;background:#444"></div>
<svg class="a" style="left:102px;top:5px" width="17" height="16">
<defs><linearGradient id="ti" x1="0" y1="0" x2="1" y2="1"><stop offset="0" stop-color="#9fd8d4"/><stop offset="1" stop-color="#3aa8a0"/></linearGradient></defs>
<rect width="17" height="16" fill="url(#ti)"/>
<polygon points="4,2 10,2 14,8 10,14 4,14 7,10 6,7 8,5" fill="#0b6d68"/>
</svg>
<div class="t" style="left:121px;top:7px;font-size:12px;font-weight:bold;color:#fff">Select File to Import</div>
<div class="a wbtn" style="left:782px;top:6px;width:16px;height:14px"></div>
<svg class="a" style="left:782px;top:6px" width="16" height="14"><path d="M4.5 3.5 L11.5 10.5 M11.5 3.5 L4.5 10.5" stroke="#000" stroke-width="1.8"/></svg>

<div class="t" style="left:153px;top:36px;font-size:11px;color:#cfcfcf">History:</div>
<div class="a" style="left:200px;top:30px;width:584px;height:20px;background:#555;border-top:2px solid #1a1a1a;border-left:2px solid #1a1a1a;border-bottom:1px solid #3a3a3a;border-right:1px solid #3a3a3a"></div>
<div class="t" style="left:203px;top:36px;font-size:11px;color:#d0d0d0">C:\Users\Vicente\Desktop\proyectoProducto\import</div>
<div class="a wbtn" style="left:766px;top:32px;width:16px;height:17px"><div class="darr"></div></div>

<div class="t" style="left:155px;top:69.5px;font-size:11px;color:#cfcfcf">Look i<u>n</u>:</div>
<div class="a" style="left:200px;top:63px;width:261px;height:23px;background:#fff;border-top:2px solid #1a1a1a;border-left:2px solid #1a1a1a;border-bottom:2px solid #2e2e2e;border-right:2px solid #2e2e2e"></div>
<svg class="a" style="left:205px;top:66px" width="16" height="17"><path d="M1 3 H7 V15 H1 Z" fill="#d8b848"/><path d="M3 2 H14 V16 H3 Z" fill="#f2dc88" stroke="#c8a840" stroke-width="0.6"/><path d="M3 5 H12 V16 H3 Z" fill="#e8c868"/></svg>
<div class="t" style="left:225px;top:69.8px;font-size:11px;color:#000">import</div>
<div class="a wbtn" style="left:443px;top:65px;width:16px;height:19px"><div class="darr"></div></div>
<svg class="a" style="left:474px;top:64px" width="100" height="22">
<defs><radialGradient id="bk" cx="0.5" cy="0.3" r="0.7"><stop offset="0" stop-color="#e8e8e8"/><stop offset="1" stop-color="#606060"/></radialGradient></defs>
<circle cx="10" cy="10" r="7" fill="url(#bk)" stroke="#555" stroke-width="0.8"/>
<path d="M6 10 H14 M6 10 L9 7 M6 10 L9 13" stroke="#fff" stroke-width="1.6" fill="none"/>
<path d="M26 8 H31 L32 9 H38 V18 H26 Z" fill="#e8c860"/><path d="M27 11 H40 L37 19 H26 Z" fill="#f4dc80"/><path d="M33 16 V6 M30 9 L33 5 L36 9" stroke="#1aa020" stroke-width="2" fill="none"/>
<path d="M49 8 H54 L55 9 H61 V18 H49 Z" fill="#e8c860"/><path d="M50 11 H63 L60 19 H49 Z" fill="#f4dc80"/><circle cx="62" cy="8" r="2.5" fill="#e85020"/>
<rect x="72" y="4" width="15" height="14" fill="#fff" stroke="#2a60c0" stroke-width="1.2"/><rect x="72" y="4" width="15" height="3" fill="#2a60c0"/>
<g fill="#7a8a9a"><rect x="75" y="9" width="2" height="2"/><rect x="79" y="9" width="2" height="2"/><rect x="83" y="9" width="2" height="2"/><rect x="75" y="13" width="2" height="2"/><rect x="79" y="13" width="2" height="2" fill="#223"/><rect x="83" y="13" width="2" height="2"/></g>
<polygon points="89,10 95,10 92,13" fill="#111"/>
</svg>

<!-- places bar -->
<div class="a" style="left:107px;top:92px;width:87px;height:518px;background:#7f7f7f;border-top:1px solid #3c3c3c;border-left:1px solid #3c3c3c;border-right:2px solid #f4f4f4;border-bottom:2px solid #f4f4f4;box-shadow:inset 1px 1px 0 #5e5e5e"></div>
<svg class="a" style="left:125px;top:94px" width="50" height="250">
<defs>
<linearGradient id="dk" x1="0" y1="0" x2="1" y2="1"><stop offset="0" stop-color="#1d5ed8"/><stop offset="0.5" stop-color="#3b86e8"/><stop offset="1" stop-color="#2a78e0"/></linearGradient>
<linearGradient id="scr" x1="0" y1="0" x2="1" y2="1"><stop offset="0" stop-color="#0a1aa0"/><stop offset="0.55" stop-color="#2a48d8"/><stop offset="1" stop-color="#8aa0f0"/></linearGradient>
<radialGradient id="gl" cx="0.35" cy="0.35" r="0.7"><stop offset="0" stop-color="#6ac8f0"/><stop offset="1" stop-color="#1a5aa8"/></radialGradient>
<linearGradient id="fl" x1="0" y1="0" x2="0" y2="1"><stop offset="0" stop-color="#fff0b8"/><stop offset="1" stop-color="#e8c860"/></linearGradient>
<linearGradient id="ph" x1="0" y1="0" x2="0" y2="1"><stop offset="0" stop-color="#3a9ad8"/><stop offset="1" stop-color="#4a8a50"/></linearGradient>
</defs>
<!-- recent -->
<circle cx="13.75" cy="10.6" r="5.8" fill="#d0d4d8" stroke="#9098a0" stroke-width="0.8"/><path d="M13.75 6.5 V10.6 H16.5" stroke="#444" stroke-width="0.8" fill="none"/>
<rect x="18.75" y="6.9" width="15" height="16.8" fill="#f0f4f8" stroke="#98a0a8" stroke-width="0.7"/>
<g stroke="#b8c4d0" stroke-width="1"><line x1="21" y1="10" x2="31" y2="10"/><line x1="21" y1="13" x2="31" y2="13"/><line x1="21" y1="16" x2="26" y2="16"/></g><rect x="27" y="14" width="5" height="4" fill="#4a9ad0"/>
<path d="M9.4 28 L33 22 L38 24 L15 33 Z" fill="#dcdfe2" stroke="#8a9098" stroke-width="0.7"/>
<rect x="15" y="18.75" width="12.5" height="10" fill="url(#ph)" stroke="#f4f4f4" stroke-width="1.2" transform="skewY(-8)" transform-origin="21 24"/>
<!-- desktop -->
<rect x="9.5" y="59.5" width="30" height="23" fill="url(#dk)" stroke="#c8d0da" stroke-width="1.6"/>
<rect x="10.5" y="79.5" width="28" height="2.5" fill="#1a2a40"/><circle cx="12.5" cy="80.5" r="1.3" fill="#8ac860"/>
<!-- libraries -->
<path d="M9 112 H19 L21 110 H41 V136 H9 Z" fill="#e6c464"/>
<rect x="12" y="109.5" width="5" height="3" fill="#3aa040"/><rect x="20" y="110.5" width="5" height="3" fill="#d04a30"/><rect x="29" y="112.5" width="5" height="3" fill="#3a80d0"/>
<rect x="11" y="112" width="28" height="6" fill="#fffbe8"/>
<path d="M9 117 H41 V136.5 H9 Z" fill="url(#fl)"/>
<path d="M16.5 136 V127.5 H33.5 V136" stroke="#78c4ec" stroke-width="3.2" fill="none"/>
<!-- computer -->
<rect x="9" y="166" width="7" height="16" fill="#d4d8dc" stroke="#9aa" stroke-width="0.6"/><rect x="10.5" y="169" width="3" height="1.5" fill="#6a6"/>
<rect x="16.5" y="161.5" width="23" height="17" fill="url(#scr)" stroke="#e4e8ec" stroke-width="1.6"/>
<path d="M24 183 L28 179 H30 L34 183 Z" fill="#c8ccd0"/><ellipse cx="28" cy="184.5" rx="7" ry="2.2" fill="#e0e2e4"/>
<!-- network -->
<circle cx="18.25" cy="226.25" r="11.5" fill="url(#gl)"/>
<path d="M10 219 Q14 217 17 221 Q15 226 19 229 Q17 234 12 232 Q8 228 8 224 Z" fill="#4ab050"/><path d="M21 216 Q26 216 28 220 L24 221 Z" fill="#5ab860"/>
<rect x="21.5" y="220.5" width="19" height="15" fill="url(#scr)" stroke="#e4e8ec" stroke-width="1.6"/>
<path d="M27 240 L30 236 H32 L35 240 Z" fill="#c8ccd0"/><ellipse cx="31" cy="241" rx="6" ry="2" fill="#e0e2e4"/>
</svg>
<div class="t" style="left:113px;top:132px;font-size:10.5px;color:#f4f4f4">Sitios recientes</div>
<div class="t" style="left:127px;top:184px;font-size:10.5px;color:#f4f4f4">Escritorio</div>
<div class="t" style="left:125px;top:237px;font-size:10.5px;color:#f4f4f4">Bibliotecas</div>
<div class="t" style="left:133px;top:288px;font-size:10.5px;color:#f4f4f4">Equipo</div>
<div class="t" style="left:139px;top:340px;font-size:10.5px;color:#f4f4f4">Red</div>

<!-- file list -->
<div class="a" style="left:200px;top:92px;width:584px;height:462px;background:#fff"></div>
<div class="a" style="left:200px;top:92px;width:584px;height:16px;background:#d4d0c8;border-bottom:1px solid #808080"></div>
<div class="a" style="left:200px;top:92px;width:584px;height:1px;background:#fff"></div>
<div class="t" style="left:206px;top:95.5px;font-size:10.3px;color:#000">Nombre</div>
<svg class="a" style="left:250px;top:96px" width="12" height="8"><polygon points="2,6 6,2 10,6" fill="#a8a49c"/></svg>
<div class="a wbtn" style="left:525px;top:92px;width:13px;height:16px"><div class="darr" style="border-width:3px 3px 0 3px;margin-left:-3px"></div></div>
<div class="a" style="left:538px;top:92px;width:1px;height:16px;background:#808080"></div>
<div class="t" style="left:544px;top:96px;font-size:10.5px;color:#000">Fecha de mod...</div>
<div class="a wbtn" style="left:630px;top:92px;width:13px;height:16px"><div class="darr" style="border-width:3px 3px 0 3px;margin-left:-3px"></div></div>
<div class="a" style="left:643px;top:92px;width:1px;height:16px;background:#808080"></div>
<div class="t" style="left:649px;top:96px;font-size:10.5px;color:#000">Tipo</div>
<div class="a wbtn" style="left:735px;top:92px;width:13px;height:16px"><div class="darr" style="border-width:3px 3px 0 3px;margin-left:-3px"></div></div>
<div class="a" style="left:748px;top:92px;width:1px;height:16px;background:#808080"></div>
<div class="t" style="left:754px;top:96px;font-size:10.5px;color:#000;width:30px;overflow:hidden">Tamaño</div>
<svg class="a" style="left:209px;top:108.5px" width="16" height="52">
<g fill="#f8f8f8" stroke="#9a9a9a" stroke-width="1"><path d="M1.5 1.5 H10 L13.5 5 V15.5 H1.5 Z"/><path d="M1.5 18.5 H10 L13.5 22 V32.5 H1.5 Z"/><path d="M1.5 35.5 H10 L13.5 39 V49.5 H1.5 Z"/></g>
</svg>
<div class="t" style="left:225px;top:112.3px;font-size:11px;color:#000">biela2.dwg</div>
<div class="t" style="left:225px;top:129.1px;font-size:11px;color:#000">mies van der rohe, the barcelona chair, 1929.dwg</div>
<div class="t" style="left:225px;top:145.9px;font-size:11px;color:#000">pc-mac_1.dwg</div>
<div class="t" style="left:544px;top:112.3px;font-size:11px;color:#000">30/09/2009 11:51</div>
<div class="t" style="left:544px;top:129.1px;font-size:11px;color:#000">07/05/2009 14:00</div>
<div class="t" style="left:544px;top:145.9px;font-size:11px;color:#000">20/02/2006 12:42</div>
<div class="t" style="left:649px;top:112.3px;font-size:11px;color:#000">Archivo DWG</div>
<div class="t" style="left:649px;top:129.1px;font-size:11px;color:#000">Archivo DWG</div>
<div class="t" style="left:649px;top:145.9px;font-size:11px;color:#000">Archivo DWG</div>
<div class="t" style="left:779px;top:112.3px;font-size:11px;color:#000">1</div>
<!-- h scrollbar -->
<div class="a" style="left:200px;top:539px;width:584px;height:16px;background:#d4d0c8"></div>
<div class="a check" style="left:737px;top:539px;width:32px;height:16px"></div>
<div class="a wbtn" style="left:200px;top:539px;width:16px;height:16px"><div class="larr"></div></div>
<div class="a wbtn" style="left:768px;top:539px;width:16px;height:16px"><div class="rarr"></div></div>
<div class="a" style="left:216px;top:539px;width:521px;height:16px;background:#d4d0c8;border-top:1px solid #fff;border-left:1px solid #fff;border-right:1px solid #404040;border-bottom:1px solid #404040"></div>

<div class="t" style="left:202px;top:570.5px;font-size:11px;color:#cfcfcf">File <u>n</u>ame:</div>
<div class="t" style="left:202px;top:596px;font-size:11px;color:#cfcfcf">Files of <u>t</u>ype:</div>
<div class="a btn3" style="left:709px;top:564px;width:75px;height:23px;border-color:#5a5a5a #1a1a1a #1a1a1a #5a5a5a"></div>
<div class="t" style="left:707px;top:569.5px;width:75px;text-align:center;font-size:10.6px;color:#dcdcdc"><u>O</u>pen</div>
<div class="a btn3" style="left:709px;top:590px;width:75px;height:23px;border-color:#5a5a5a #1a1a1a #1a1a1a #5a5a5a"></div>
<div class="t" style="left:707px;top:596px;width:75px;text-align:center;font-size:10.6px;color:#dcdcdc">Cancel</div>
<svg class="a" style="left:788px;top:608px" width="12" height="12"><g fill="#111"><rect x="9" y="1" width="2" height="2"/><rect x="6" y="4" width="2" height="2"/><rect x="9" y="4" width="2" height="2"/><rect x="3" y="7" width="2" height="2"/><rect x="6" y="7" width="2" height="2"/><rect x="9" y="7" width="2" height="2"/></g></svg>

<!-- files of type combo -->
<div class="a" style="left:296px;top:592px;width:393px;height:21px;background:#555;border-top:2px solid #050505;border-left:2px solid #0a0a0a;border-bottom:2px solid #353535;border-right:1px solid #303030"></div>
<div class="t" style="left:300px;top:597.8px;font-size:10.7px;color:#e8e8e8">All Formats</div>
<div class="a wbtn" style="left:671px;top:594px;width:16px;height:16px"><div class="darr"></div></div>
<div class="a" style="left:296px;top:200px;width:393px;height:392px;background:#585858;border:1px solid #000"></div>
<div class="a" style="left:297px;top:357px;width:375px;height:13px;background:#0a246a"></div>
<div class="t" style="left:299px;top:202.6px;font-size:10.7px;color:#f0f0f0">Autodesk (*.FBX)</div>
<div class="t" style="left:299px;top:215.6px;font-size:10.7px;color:#f0f0f0">3D Studio Mesh (*.3DS,*.PRJ)</div>
<div class="t" style="left:299px;top:228.6px;font-size:10.7px;color:#f0f0f0">Adobe Illustrator (*.AI)</div>
<div class="t" style="left:299px;top:241.6px;font-size:10.7px;color:#f0f0f0">Autodesk Packet File (*.APF)</div>
<div class="t" style="left:299px;top:254.6px;font-size:10.7px;color:#f0f0f0">ProEASM (*.ASM)</div>
<div class="t" style="left:299px;top:267.6px;font-size:10.7px;color:#f0f0f0">Catia V5 (*.CATPART,*.CGR,*.CATPRODUCT)</div>
<div class="t" style="left:299px;top:280.6px;font-size:10.7px;color:#f0f0f0">Autodesk Collada (*.DAE)</div>
<div class="t" style="left:299px;top:293.6px;font-size:10.7px;color:#f0f0f0">LandXML / DEM / DDF (*.DEM,*.XML,*.DDF)</div>
<div class="t" style="left:299px;top:306.6px;font-size:10.7px;color:#f0f0f0">AutoCAD Drawing (*.DWG,*.DXF)</div>
<div class="t" style="left:299px;top:319.6px;font-size:10.7px;color:#f0f0f0">Legacy AutoCAD (*.DWG)</div>
<div class="t" style="left:299px;top:332.6px;font-size:10.7px;color:#f0f0f0">Flight Studio OpenFlight (*.FLT)</div>
<div class="t" style="left:299px;top:345.6px;font-size:10.7px;color:#f0f0f0">Motion Analysis HTR File (*.HTR)</div>
<div class="t" style="left:299px;top:358.6px;font-size:10.7px;color:#f0f0f0">IGES (*.IGE,*.IGES,*.IGS)</div>
<div class="t" style="left:299px;top:371.6px;font-size:10.7px;color:#f0f0f0">Autodesk Inventor (*.IPT,*.IAM)</div>
<div class="t" style="left:299px;top:384.6px;font-size:10.7px;color:#f0f0f0">JT (*.JT)</div>
<div class="t" style="left:299px;top:397.6px;font-size:10.7px;color:#f0f0f0">Catia V4 (*.MODEL,*.DLV4,*.DLV3,*.DLV,*.EXP,*.SESSION,*.MDL)</div>
<div class="t" style="left:299px;top:410.6px;font-size:10.7px;color:#f0f0f0">gw::OBJ-Importer (*.OBJ)</div>
<div class="t" style="left:299px;top:423.6px;font-size:10.7px;color:#f0f0f0">ProE (*.PRT)</div>
<div class="t" style="left:299px;top:436.6px;font-size:10.7px;color:#f0f0f0">UG-NX (*.PRT)</div>
<div class="t" style="left:299px;top:449.6px;font-size:10.7px;color:#f0f0f0">ACIS SAT: (*.SAT)</div>
<div class="t" style="left:299px;top:462.6px;font-size:10.7px;color:#f0f0f0">3D Studio Shape (*.SHP)</div>
<div class="t" style="left:299px;top:475.6px;font-size:10.7px;color:#f0f0f0">Google SketchUp (*.SKP)</div>
<div class="t" style="left:299px;top:488.6px;font-size:10.7px;color:#f0f0f0">SolidWorks (*.SLDPRT,*.SLDASM)</div>
<div class="t" style="left:299px;top:501.6px;font-size:10.7px;color:#f0f0f0">StereoLitho (*.STL)</div>
<div class="t" style="left:299px;top:514.6px;font-size:10.7px;color:#f0f0f0">STEP (*.STP,*.STEP)</div>
<div class="t" style="left:299px;top:527.6px;font-size:10.7px;color:#f0f0f0">Motion Analysis TRC File (*.TRC)</div>
<div class="t" style="left:299px;top:540.6px;font-size:10.7px;color:#f0f0f0">Autodesk Alias (*.WIRE)</div>
<div class="t" style="left:299px;top:553.6px;font-size:10.7px;color:#f0f0f0">VRML (*.WRL,*.WRZ)</div>
<div class="t" style="left:299px;top:566.6px;font-size:10.7px;color:#f0f0f0">VIZ Material XML Import (*.XML)</div>
<div class="t" style="left:299px;top:579.6px;font-size:10.7px;color:#f0f0f0">All files (*.*)</div>
<div class="a" style="left:672px;top:201px;width:16px;height:390px;background:#d4d0c8"></div>
<div class="a check" style="left:672px;top:216px;width:16px;height:14px"></div>
<div class="a wbtn" style="left:672px;top:201px;width:16px;height:15px"><div class="uarr"></div></div>
<div class="a" style="left:672px;top:230px;width:16px;height:345px;background:#d4d0c8;border-top:1px solid #fff;border-left:1px solid #fff;border-right:1px solid #404040;border-bottom:1px solid #404040"></div>
<div class="a wbtn" style="left:672px;top:575px;width:16px;height:16px"><div class="darr"></div></div>
<svg class="a" style="left:383px;top:361px" width="16" height="24"><path d="M1.5 1.5 L1.5 17 L5 13.5 L8 20.5 L10.5 19.5 L7.5 12.5 L12.5 12.5 Z" fill="#fff" stroke="#000" stroke-width="1"/></svg>
</body></html>
